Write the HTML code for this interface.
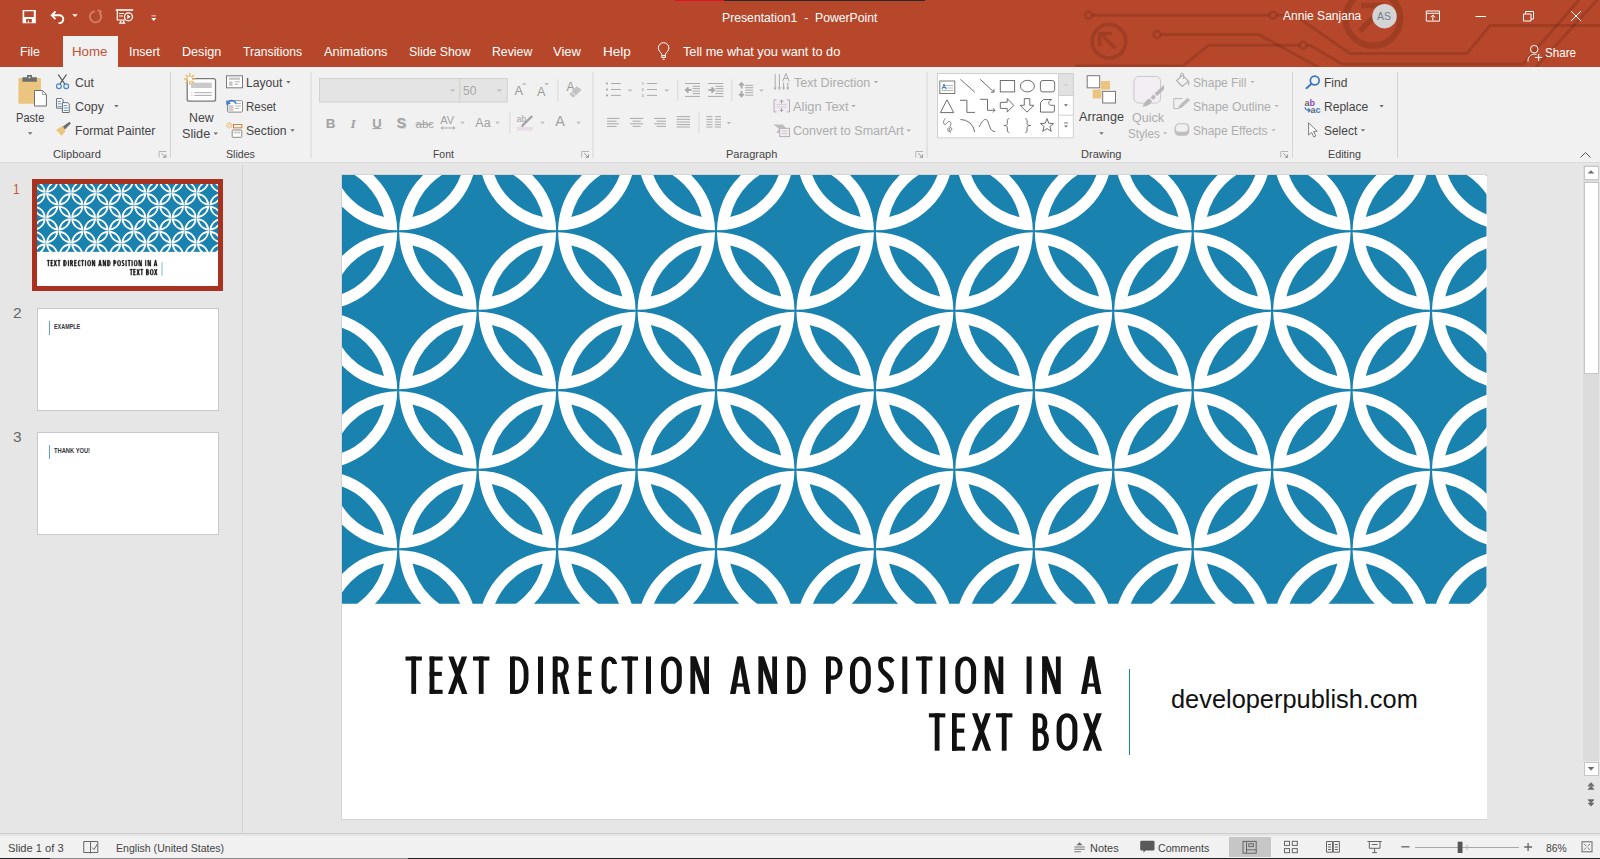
<!DOCTYPE html>
<html><head><meta charset="utf-8"><title>PowerPoint</title>
<style>
*{margin:0;padding:0;box-sizing:border-box}
html,body{width:1600px;height:859px;overflow:hidden}
body{position:relative;font-family:"Liberation Sans",sans-serif;background:#E6E6E6}
.a{position:absolute}
.t{position:absolute;white-space:nowrap;line-height:1;transform-origin:0 50%}
svg{position:absolute;overflow:visible}
.th .ttl g path:not([fill]){stroke:#111;stroke-width:2.2}
.th .ttl > path{stroke-width:7}
</style></head><body>
<!-- title bar + tabs -->
<div class="a" style="left:0;top:0;width:1600px;height:67px;background:#B7472A"></div>
<div class="a" style="left:675px;top:0;width:49px;height:1px;background:#E81123"></div>
<div class="a" style="left:724px;top:0;width:201px;height:1px;background:#2B2B2B"></div>
<div class="a" style="left:63px;top:36px;width:55px;height:31px;background:#F1F1F1"></div>
<svg width="1600" height="67" style="left:0;top:0">
<g fill="none" stroke="#000" stroke-opacity="0.12" stroke-width="3">
<path d="M1092.2 15.2H1269.5M1276.5 15.2H1294.7L1350 53.5H1467L1490 25.5H1600"/>
<circle cx="1088.7" cy="15.2" r="3.5" stroke-width="2.6"/>
<circle cx="1273" cy="15.2" r="3.5" stroke-width="2.6"/>
<circle cx="1109" cy="41.3" r="16.8" stroke-width="3.7"/>
<path d="M1115.5 48.5L1101 34M1099.5 46V33.5H1112" stroke-width="3.6"/>
<path d="M1160.5 34.6H1259L1318 67"/>
<circle cx="1157" cy="34.6" r="3.5" stroke-width="2.6"/>
<path d="M1075 66H1183L1208.5 45.2H1299.5M1306.5 45.2H1310L1342 64H1523L1579 0"/>
<circle cx="1303" cy="45.2" r="3.5" stroke-width="2.6"/>
<path d="M1536 67L1599 -2"/>
<circle cx="1373" cy="18.5" r="27.3" stroke-width="6.5"/>
<path d="M1360 31L1376 15M1361 5.5H1381V26" stroke-width="5.5"/>
</g>
<!-- QAT -->
<g fill="#fff">
<path fill-rule="evenodd" d="M22.6 10H35.8V23.2H22.6ZM24.2 11.3V17H33.8V11.3ZM26.1 19.1V22.4H27.9V20.4H28.9V22.4H31.85V19.1Z"/>
<path d="M72.2 14.3H77.8L75 16.9Z"/>
<path d="M151.4 15.5H156.1V16.3H151.4ZM151.2 17.9H156.3L153.75 20.9Z"/>
</g>
<g fill="none" stroke="#fff">
<path d="M55.5 11.5L51.8 15.3L55.5 19.1M52 15.3H59.3A4 4 0 0 1 63.3 19.3A3.8 3.8 0 0 1 59.5 23.1H58.5" stroke-width="1.9"/>
<path d="M99.5 12.8A5.6 5.6 0 1 1 94.8 11.2M97.5 10.2L100.8 11.4L99.6 14.8" stroke-width="1.9" stroke-opacity="0.3"/>
<path d="M115.8 10H133.2" stroke-width="1.6"/>
<path d="M117.3 10.5V20H125.5M119 13.5H124M119 16H123" stroke-width="1.2"/>
<circle cx="128.5" cy="16.8" r="4" stroke-width="1.3"/>
<path d="M121.3 20.5L119.8 23.2H124.6L123.1 20.5" stroke-width="1.2"/>
</g>
<path d="M127.3 14.6L130.6 16.8L127.3 19Z" fill="#fff"/>
<!-- window controls -->
<g fill="none" stroke="#fff" stroke-width="1">
<path d="M1426.3 11H1439.5V21.1H1426.3ZM1426.3 13.3H1439.5M1432.9 20.5V15.2M1430.6 17.3L1432.9 15L1435.2 17.3" />
<path d="M1475.5 16.5H1486"/>
<path d="M1523.5 14H1531V21H1523.5ZM1525.5 14V11.5H1533.5V19H1531"/>
<path d="M1571 11L1581 21M1581 11L1571 21"/>
<circle cx="1534.2" cy="49.2" r="3.8"/>
<path d="M1528 61.5A6.5 6.5 0 0 1 1536.5 54.5M1538.7 53.8V61M1535.1 57.4H1542.3"/>
<!-- lightbulb -->
<path d="M661.8 54.2C661.2 52.5 658.3 51 658.3 48A5.3 5.3 0 0 1 668.9 48C668.9 51 666 52.5 665.4 54.2V57.5H661.8ZM661.8 55.7H665.4M662.6 59.3H664.6"/>
</g>
<circle cx="1384.5" cy="16.2" r="12.2" fill="#D4D4D4"/>
</svg>
<div class="t" style="left:1377.3px;top:11px;font-size:11px;color:#6F7F8E;transform:scaleX(0.95)">AS</div>

<!-- ribbon -->
<div class="a" style="left:0;top:67px;width:1600px;height:95px;background:#F1F1F1"></div>
<div class="a" style="left:0;top:162px;width:1600px;height:1px;background:#DADADA"></div>
<svg width="1600" height="100" viewBox="0 67 1600 100" style="left:0;top:67px">
<!-- group separators -->
<g fill="#D5D5D5">
<rect x="170" y="72" width="1" height="86"/><rect x="310.5" y="72" width="1" height="86"/>
<rect x="592.5" y="72" width="1" height="86"/><rect x="926.5" y="72" width="1" height="86"/>
<rect x="1292" y="72" width="1" height="86"/><rect x="1397" y="72" width="1" height="86"/>
</g>
<!-- Paste -->
<rect x="18.4" y="78.1" width="22.5" height="25.7" rx="1" fill="#EBC47F"/>
<path d="M22.4 77.3H27V75H32V77.3H36.9V81.8H22.4Z" fill="#6E6E6E"/>
<circle cx="29.5" cy="77.4" r="0.9" fill="#F1F1F1"/>
<path d="M34.5 90.5H42.4L46.4 94.5V106H34.5Z" fill="#fff" stroke="#6E6E6E" stroke-width="1"/>
<path d="M42.4 90.5V94.5H46.4" fill="none" stroke="#8A8A8A" stroke-width="0.8"/>
<path d="M27.9 132.3H32.4L30.15 134.8Z" fill="#6E6E6E"/>
<!-- Cut -->
<path d="M58.2 74.5L64.8 84M66.5 74.5L59.9 84" stroke="#555" stroke-width="1.3" fill="none"/>
<circle cx="58.9" cy="86.3" r="2.4" fill="none" stroke="#4A86C8" stroke-width="1.2"/>
<circle cx="66.2" cy="86.3" r="2.4" fill="none" stroke="#4A86C8" stroke-width="1.2"/>
<!-- Copy -->
<path d="M56.6 98.6H61.8L63.2 100V108.2H56.6Z" fill="#fff" stroke="#6A6A6A" stroke-width="1"/>
<path d="M57.8 101.5H60.8M57.8 103.8H61.5M57.8 106.4H61.5" stroke="#4A86C8" stroke-width="0.9"/>
<path d="M62.4 102.7H67.8L69.2 104.1V112.5H62.4Z" fill="#fff" stroke="#6A6A6A" stroke-width="1"/>
<path d="M63.6 105.5H67M63.6 107.9H68M63.6 110.4H68" stroke="#4A86C8" stroke-width="0.9"/>
<path d="M114.2 105H118.6L116.4 107.5Z" fill="#6E6E6E"/>
<!-- Format painter -->
<path d="M56 129.8L62.5 126L65.5 131L61.7 136Z" fill="#EBC47F"/>
<path d="M62.8 126.5L69.5 121.8L70.8 123.6L65 129.5Z" fill="#6E6E6E"/>

<!-- New slide -->
<rect x="187.2" y="78.6" width="28.3" height="22.6" rx="2" fill="#fff" stroke="#7A7A7A" stroke-width="1.3"/>
<rect x="191" y="82.6" width="20.8" height="5.4" fill="#CACACA"/>
<path d="M194.3 92.7H211.8M194.3 95.4H211.8M191.4 92.7H192.4M191.4 95.4H192.4" stroke="#A0A0A0" stroke-width="0.9"/>
<g stroke="#EBB866" stroke-width="1.5"><path d="M189.8 73.3V84.7M184.1 79H195.5M185.8 75L193.8 83M185.8 83L193.8 75"/></g>
<circle cx="189.8" cy="79" r="2.2" fill="#fff"/>
<path d="M213.5 132.6H218L215.75 135Z" fill="#6E6E6E"/>
<!-- Layout -->
<rect x="226.5" y="75.8" width="16" height="12" fill="#fff" stroke="#7A7A7A" stroke-width="1"/>
<rect x="228.9" y="77.5" width="11" height="2.4" fill="#C8C8C8"/>
<rect x="228.9" y="81.4" width="3.7" height="4.5" fill="#C8C8C8"/>
<path d="M234.5 81.8H239.9M234.5 84.2H238.5" stroke="#A8A8A8" stroke-width="0.9"/>
<path d="M286.2 81H290.6L288.4 83.4Z" fill="#6E6E6E"/>
<!-- Reset -->
<rect x="227.5" y="100.7" width="15" height="11.4" rx="1" fill="#fff" stroke="#8A8A8A" stroke-width="1"/>
<rect x="228.5" y="105" width="5" height="6.5" fill="#D0D0D0"/>
<path d="M235 103.5H241M235 106H241M235 108.5H239" stroke="#B0B0B0" stroke-width="0.9"/>
<path d="M236 103.5A4.5 4.5 0 0 0 228.3 102.3" fill="none" stroke="#3E7CC4" stroke-width="1.6"/>
<path d="M226 100.3L226.6 105.2L231 103.5Z" fill="#3E7CC4"/>
<!-- Section -->
<g stroke="#EBB866" stroke-width="1"><path d="M229.3 122V128.8M225.9 125.4H232.7M226.9 123L231.7 127.8M226.9 127.8L231.7 123"/></g>
<circle cx="229.3" cy="125.4" r="1.2" fill="#F1F1F1"/>
<rect x="233.5" y="124.5" width="8.3" height="3.3" fill="#fff" stroke="#E07A3C" stroke-width="1"/>
<rect x="232.2" y="130" width="9.6" height="7.3" rx="0.8" fill="#fff" stroke="#8A8A8A" stroke-width="1"/>
<rect x="233.7" y="131.6" width="6.6" height="1.8" fill="#C8C8C8"/>
<path d="M290.3 129.3H294.7L292.5 131.7Z" fill="#6E6E6E"/>
<!-- FONT group -->
<rect x="319.5" y="78.5" width="140.5" height="23.6" fill="#E4E4E4" stroke="#D2D2D2" stroke-width="1"/>
<rect x="460" y="78.5" width="47.3" height="23.6" fill="#E4E4E4" stroke="#D2D2D2" stroke-width="1"/>
<g fill="#B8B8B8">
<path d="M450.2 89.5H455L452.6 91.8Z"/><path d="M497 89.5H501.8L499.4 91.8Z"/>
<path d="M521.9 84.8H526.3L524.1 82.5Z"/><path d="M544.4 83H548.8L546.6 85.5Z"/>
<path d="M460.3 121.8H464.7L462.5 124Z"/><path d="M495.3 121.8H499.7L497.5 124Z"/>
<path d="M540.3 121.8H544.7L542.5 124Z"/><path d="M576.3 121.8H580.7L578.5 124Z"/>
<path d="M627.7 89.5H632.5L630.1 91.8Z"/><path d="M664.3 89.5H669.1L666.7 91.8Z"/>
<path d="M759 89.5H763.8L761.4 91.8Z"/><path d="M726.6 122H731.4L729 124.3Z"/>
</g>
<g font-family="Liberation Sans" fill="#A2A2A2">
<text x="514.6" y="94.8" font-size="12.8" fill="#9A9A9A">A</text>
<text x="537.1" y="95.8" font-size="12.6" fill="#9A9A9A">A</text>
<text x="566.6" y="91" font-size="12" fill="#9A9A9A">A</text>
<text x="325.8" y="127.7" font-size="13.5" font-weight="700">B</text>
<text x="350.5" y="127.7" font-size="13.5" font-weight="700" font-family="Liberation Serif" font-style="italic">I</text>
<text x="372.3" y="127.5" font-size="13" font-weight="700">U</text>
<text x="397.5" y="128.6" font-size="14.5" font-weight="700" fill="#D8D8D8">S</text>
<text x="396.5" y="127.7" font-size="14.5" font-weight="700">S</text>
<text x="415.5" y="127.6" font-size="11.5">abc</text>
<text x="440.3" y="124" font-size="11">AV</text>
<text x="475.3" y="126.5" font-size="12.5">Aa</text>
<text x="516.8" y="121.5" font-size="8.5">ab</text>
<text x="555.3" y="125.6" font-size="14.5">A</text>
</g>
<path d="M372.5 128.6H381.5M415.5 124.3H432.2" stroke="#A2A2A2" stroke-width="1"/>
<path d="M441 128H455M443 126.3L441 128L443 129.7M453 126.3L455 128L453 129.7" fill="none" stroke="#A2A2A2" stroke-width="0.9"/>
<path d="M569.3 94.3L576.5 86.3L581.8 89.8L573.5 97.8Z" fill="#C4C2C6"/>
<path d="M571.4 92L575.6 95.6" stroke="#F1F1F1" stroke-width="0.9"/>
<path d="M522 126L532.2 116" stroke="#A2A2A2" stroke-width="2.4"/>
<path d="M522.5 125.7L520.5 127H523.5Z" fill="#A2A2A2"/>
<rect x="517" y="127" width="16" height="3.5" fill="#E8DCE8"/>
<rect x="557.3" y="79.5" width="1" height="22" fill="#D8D8D8"/>
<rect x="509.3" y="112" width="1" height="21.5" fill="#D8D8D8"/>

<!-- PARAGRAPH group -->
<g fill="#A8A8A8">
<circle cx="607" cy="83.5" r="1.1"/><circle cx="607" cy="89.5" r="1.1"/><circle cx="607" cy="95.4" r="1.1"/>
</g>
<g stroke="#ABABAB" stroke-width="1" fill="none">
<path d="M611 83.5H620.8M611 89.5H620.8M611 95.4H620.8"/>
<path d="M646.9 83.5H657M646.9 89.5H657M646.9 95.4H657"/>
<path d="M685 83.5H700M685 96.4H700M692.6 86.3H700M692.6 88.6H700M692.6 91.1H700M692.6 93.6H700"/>
<path d="M708 83.5H723.4M708 96.4H723.4M715.5 86.3H723.4M715.5 88.6H723.4M715.5 91.1H723.4M715.5 93.6H723.4"/>
<path d="M745.2 85.3H753.2M745.2 87.7H753.2M745.2 90.2H753.2M745.2 92.7H753.2M745.2 95.2H753.2"/>
<path d="M607 118.4H619.3M607 121.2H616.6M607 123.8H619.3M607 126.4H616.6"/>
<path d="M629.9 118.4H643.2M632.5 121.2H640.7M629.9 123.8H643.2M632.5 126.4H640.7"/>
<path d="M654 118.4H666M656.5 121.2H666M654 123.8H666M656.5 126.4H666"/>
<path d="M676.6 116.6H690M676.6 119.3H690M676.6 122H690M676.6 124.6H690M676.6 127H690"/>
<path d="M706.4 116.6H712.5M714.9 116.6H721M706.4 119.3H712.5M714.9 119.3H721M706.4 122H712.5M714.9 122H721M706.4 124.6H712.5M714.9 124.6H721M706.4 127H712.5M714.9 127H721"/>
</g>
<g stroke="#A8A8A8" stroke-width="1.8" fill="none">
<path d="M691.5 90H686M688.5 87.3L685.8 90L688.5 92.7"/>
<path d="M708.5 90H714M711.5 87.3L714.2 90L711.5 92.7"/>
<path d="M741.5 83.5V88.5M739.2 85.5L741.5 83L743.8 85.5M741.5 91V96.3M739.2 94L741.5 96.5L743.8 94"/>
</g>
<g font-family="Liberation Sans" fill="#A8A8A8" font-size="4.2" font-weight="700">
<text x="641.5" y="85.2">1</text><text x="641.5" y="91.2">2</text><text x="641.5" y="97.1">3</text>
</g>
<rect x="677.2" y="79.4" width="1" height="21.8" fill="#D8D8D8"/>
<rect x="731.4" y="79.4" width="1" height="21.8" fill="#D8D8D8"/>
<rect x="698.4" y="112" width="1" height="21.6" fill="#D8D8D8"/>
<!-- Text direction -->
<g stroke="#ABABAB" stroke-width="1" fill="none">
<path d="M775.2 74.2V89.2M779.4 74.2V89.2M783.6 82.6V89.2M787.8 82.6V89.2"/>
<path d="M782.7 81.3L785.95 73.4L789.2 81.3M784 78.4H788"/>
</g>
<g fill="#ABABAB"><path d="M773.7 87.5H776.7L775.2 90Z"/><path d="M777.9 87.5H780.9L779.4 90Z"/><path d="M782.1 87.5H785.1L783.6 90Z"/><path d="M786.3 87.5H789.3L787.8 90Z"/>
<path d="M873.8 81H878.2L876 83.3Z"/><path d="M851.3 105H855.7L853.5 107.3Z"/><path d="M906.5 129.4H910.9L908.7 131.7Z"/></g>
<!-- Align text -->
<rect x="774" y="99.5" width="15.5" height="12.5" fill="#F2EAF2"/>
<path d="M776.5 99.8H774V111.9H776.5M787 99.8H789.5V111.9H787" fill="none" stroke="#B0B0B0" stroke-width="1"/>
<path d="M776.5 104.4H786.5M776.5 106.9H786.5" stroke="#C8C8C8" stroke-width="0.8"/>
<path d="M781.5 100V103.5M779.8 101.7L781.5 100L783.2 101.7M781.5 108V111.5M779.8 109.8L781.5 111.5L783.2 109.8" fill="none" stroke="#A0A0A0" stroke-width="1"/>
<!-- Convert to smartart -->
<path d="M773.4 124.5H783L786.4 129H779.5V132.9H776.4L779 128.8Z" fill="#BDBDBD"/>
<rect x="779.7" y="128.3" width="9.8" height="8.3" fill="#F2EAF2" stroke="#B0B0B0" stroke-width="1"/>
<path d="M782 131H787.5M782 133.5H787.5" stroke="#C0C0C0" stroke-width="0.8"/>

<!-- DRAWING gallery -->
<rect x="937.5" y="73.5" width="135.8" height="64.3" fill="#fff" stroke="#D0D0D0" stroke-width="1"/>
<rect x="1058.5" y="73.5" width="14.8" height="22" fill="#E1E1E1" stroke="#D0D0D0" stroke-width="1"/>
<path d="M1058.5 95.5H1073.3M1058.5 115.2H1073.3M1058.5 73.5V137.8" stroke="#D0D0D0" stroke-width="1"/>
<path d="M1063.9 85.5H1068L1065.95 83.5Z" fill="#C8C8C8"/>
<path d="M1063.9 104.3H1068L1065.95 106.4Z" fill="#6E6E6E"/>
<path d="M1063.9 125.5H1068L1065.95 127.6Z" fill="#6E6E6E"/><rect x="1063.9" y="122.5" width="4.1" height="0.9" fill="#6E6E6E"/>
<g fill="none" stroke="#6E6E6E" stroke-width="1">
<rect x="939.8" y="81" width="15" height="12.5" stroke="#7A7A7A"/>
<path d="M945.5 85.5H953M945.5 88H953M941.5 90.5H953" stroke="#A8A8A8" stroke-width="0.8"/>
<path d="M960.4 79.3L974.8 92.2"/>
<path d="M980.2 79.3L994 92.2M994 89L994 92.2L991 92.2"/>
<rect x="1000.3" y="80.5" width="14.3" height="11.4"/>
<ellipse cx="1027.4" cy="86.1" rx="7" ry="5.8"/>
<rect x="1040.4" y="80.5" width="14.3" height="11.4" rx="2.5"/>
<path d="M940.4 112.6L947 99.8L953.7 112.6Z"/>
<path d="M960 100.3H966.9V112.4H974.9"/>
<path d="M980.2 99.3H987.5V110.3H995M992.8 108.1L995 110.3L992.8 112.5"/>
<path d="M1000.3 102.3H1007.2V98.6L1013.8 105.4L1007.2 112.1V108.4H1000.3Z"/>
<path d="M1024.3 98.6H1029.8V105.3H1034L1027 112.1L1020.1 105.3H1024.3Z"/>
<path d="M1040.5 112.1V102.5L1043.5 99.5H1051.6C1049.6 100.5 1048.5 102 1048.8 103.5C1049 104.6 1049.8 105.3 1051 105.3H1054.4V110.8A1.3 1.3 0 0 1 1053.1 112.1Z"/>
<path d="M945.5 118.3C944 120 942.5 122.5 944.3 124.3C946 125.5 947.5 121 949.5 121.5C952 122.3 950.5 126 949.2 127.3C947.5 128.8 946.8 130.3 948.8 131C951 131.5 952.6 129.6 951.3 127.8C950 126.8 948.8 129.5 949.4 131.5L950.8 132.8" stroke-width="0.9"/>
<path d="M960.4 119.5A14 14 0 0 1 974.7 132"/>
<path d="M979.1 127C981 123.5 983 119.4 985.6 119.4C988 119.4 988.5 124 989.8 127C991 130 992.5 131.6 995.1 131.6"/>
<path d="M1009.2 118.6C1007.6 118.8 1007.3 119.8 1007.3 121.2V123.5C1007.3 124.8 1006.5 125.5 1003.8 125.5C1006.5 125.5 1007.3 126.3 1007.3 127.6V130C1007.3 131.4 1007.6 132.3 1009.2 132.5"/>
<path d="M1025.2 118.6C1026.8 118.8 1027.1 119.8 1027.1 121.2V123.5C1027.1 124.8 1027.9 125.5 1030.6 125.5C1027.9 125.5 1027.1 126.3 1027.1 127.6V130C1027.1 131.4 1026.8 132.3 1025.2 132.5"/>
<path d="M1047 118.6L1048.8 123.3L1053.6 123.5L1049.9 126.6L1051.3 131.4L1047 128.6L1042.7 131.4L1044.1 126.6L1040.4 123.5L1045.2 123.3Z"/>
</g>
<path d="M942 89.3L944 84L946 89.3M942.8 87.5H945.2" fill="none" stroke="#3E7CC4" stroke-width="1"/>
<!-- Arrange -->
<rect x="1100.9" y="81" width="9.1" height="8.6" fill="#EBC47F"/>
<rect x="1092.7" y="89.6" width="8.8" height="8.8" fill="#EBC47F"/>
<rect x="1087.2" y="75.7" width="12.5" height="12.1" fill="#fff" stroke="#777" stroke-width="1"/>
<rect x="1102.7" y="91.4" width="12.8" height="11.6" fill="#fff" stroke="#777" stroke-width="1"/>
<path d="M1099.3 132.3H1103.7L1101.5 134.7Z" fill="#6E6E6E"/>
<!-- Quick styles -->
<rect x="1133.9" y="76.4" width="26.7" height="26.7" rx="5" fill="#F3EEF3" stroke="#C8C8C8" stroke-width="1"/>
<path d="M1142.2 106.5C1145 103 1146 99.5 1149.5 98.5L1152 101C1151 104.5 1147 106.5 1142.2 106.5Z" fill="#B8B8B8"/>
<path d="M1150.5 97.5L1153.5 94.5L1156 97L1153 100Z" fill="#B8B8B8"/>
<path d="M1154.5 93.5L1164 84.7V89.5L1157 96Z" fill="#B8B8B8"/>
<path d="M1163 102.5L1164.5 101.2L1164.5 107L1162.5 110.8L1160.6 110.8Z" fill="none"/>
<!-- Shape fill / outline / effects -->
<path d="M1176.6 80.5L1182.6 75.2L1188.3 81.2L1182.2 86.5Z" fill="#F3EEF3" stroke="#B0B0B0" stroke-width="1.1" stroke-linejoin="round"/>
<path d="M1180.4 77.5V74.8A1.6 1.6 0 0 1 1183.6 74.8V79" fill="none" stroke="#B0B0B0" stroke-width="1"/>
<path d="M1187.5 80.2C1189 80.5 1189.6 82 1189.4 83.5L1189 86L1187.8 84.5Z" fill="#B8B8B8"/>
<path d="M1182.5 98.6H1173.8V108.5H1179" fill="none" stroke="#B8B8B8" stroke-width="1"/>
<path d="M1178.2 108.6L1179 105.8L1187.6 97.8L1190 100.2L1181.3 108.1Z" fill="#BDBDBD"/>
<path d="M1174.5 129.2C1174.5 125.5 1176.5 123.2 1180 123.2H1184.5C1188 123.2 1189.3 125 1189.3 128.5V131C1189.3 134 1187.5 135.7 1184.5 135.7H1178.5C1176 135.7 1174.5 133.5 1174.5 129.2Z" fill="#BEBEBE"/>
<path d="M1175.8 128.3C1175.8 125.5 1177.3 124.3 1180 124.3H1184C1186.6 124.3 1187.8 125.3 1187.8 127.3V128.8C1187.8 130.7 1186.8 131.8 1184.3 131.8H1178.5C1176.6 131.8 1175.8 130.5 1175.8 128.3Z" fill="#F3EEF3"/>
<g fill="#B8B8B8">
<path d="M1250.4 81H1254.6L1252.5 83.2Z"/><path d="M1274.5 105H1278.7L1276.6 107.2Z"/><path d="M1271.4 129.2H1275.6L1273.5 131.4Z"/>
<path d="M1163 132.3H1167.2L1165.1 134.6Z"/>
</g>
<!-- Editing -->
<circle cx="1314.75" cy="80.5" r="4.4" fill="none" stroke="#3B78C0" stroke-width="1.7"/>
<path d="M1311.5 83.8L1306.5 88.2" stroke="#3B78C0" stroke-width="2" stroke-linecap="round"/>
<g font-family="Liberation Sans" font-size="9" font-weight="700">
<text x="1304.6" y="105.6" fill="#666">a</text><text x="1309.6" y="105.6" fill="#8A4FB8">b</text>
<text x="1310.6" y="113.3" fill="#666">a</text><text x="1315.6" y="113.3" fill="#3B78C0">c</text>
</g>
<path d="M1305 107.2C1305 109.5 1306.5 110.3 1310 110.3M1308.1 108.4L1310.2 110.3L1308.1 112.2" fill="none" stroke="#3B78C0" stroke-width="1.2"/>
<path d="M1379.4 105H1383.8L1381.6 107.4Z M1360.8 129.2H1365.2L1363 131.6Z" fill="#6E6E6E"/>
<path d="M1308.6 122.8V135L1311.6 132.3L1313.8 137L1315.8 136L1313.6 131.5L1317.2 131.2Z" fill="#fff" stroke="#6E6E6E" stroke-width="0.9" stroke-linejoin="round"/>
<path d="M159.1 157.6V151.5H166.4" fill="none" stroke="#B4B4B4" stroke-width="1"/><path d="M161.6 153.3L165.5 157.1M165.9 154.3V157.3H162.9" fill="none" stroke="#8C8C8C" stroke-width="0.9"/><path d="M581.7 157.6V151.5H589.0" fill="none" stroke="#B4B4B4" stroke-width="1"/><path d="M584.2 153.3L588.1 157.1M588.5 154.3V157.3H585.5" fill="none" stroke="#8C8C8C" stroke-width="0.9"/><path d="M915.8 157.6V151.5H923.1" fill="none" stroke="#B4B4B4" stroke-width="1"/><path d="M918.3 153.3L922.2 157.1M922.6 154.3V157.3H919.6" fill="none" stroke="#8C8C8C" stroke-width="0.9"/><path d="M1280.8 157.6V151.5H1288.1" fill="none" stroke="#B4B4B4" stroke-width="1"/><path d="M1283.3 153.3L1287.2 157.1M1287.6 154.3V157.3H1284.6" fill="none" stroke="#8C8C8C" stroke-width="0.9"/>
<!-- collapse ribbon -->
<path d="M1580.5 157.5L1585.5 152.5L1590.5 157.5" fill="none" stroke="#555" stroke-width="1"/>
</svg>
<!-- left pane splitter -->
<div class="a" style="left:242px;top:165px;width:1px;height:668px;background:#D2D2D2"></div>
<!-- slide -->
<div class="a" style="left:341px;top:174px;width:1146px;height:646px;background:#D4D4D4"></div>
<div class="a" style="left:342px;top:175px;width:1144.5px;height:644px;background:#FFFFFF;overflow:hidden">
  <svg width="1144.5" height="428.75" style="left:0;top:0;overflow:hidden">
    <rect width="1144.5" height="428.75" fill="#1A82AE"/>
    <g fill="#FFFFFF"><path fill-rule="evenodd" d="M-22.24 -22.09A78.45 78.45 0 0 0 55.19 55.34A78.45 78.45 0 0 0 -22.24 -22.09ZM-9.01 -8.86A66.75 66.75 0 0 0 41.96 42.11A66.75 66.75 0 0 0 -9.01 -8.86ZM-22.24 136.81A78.45 78.45 0 0 0 55.19 214.24A78.45 78.45 0 0 0 -22.24 136.81ZM-9.01 150.04A66.75 66.75 0 0 0 41.96 201.01A66.75 66.75 0 0 0 -9.01 150.04ZM-22.24 295.71A78.45 78.45 0 0 0 55.19 373.14A78.45 78.45 0 0 0 -22.24 295.71ZM-9.01 308.94A66.75 66.75 0 0 0 41.96 359.91A66.75 66.75 0 0 0 -9.01 308.94ZM57.21 57.36A78.45 78.45 0 0 0 134.64 134.79A78.45 78.45 0 0 0 57.21 57.36ZM70.44 70.59A66.75 66.75 0 0 0 121.41 121.56A66.75 66.75 0 0 0 70.44 70.59ZM55.19 57.36A78.45 78.45 0 0 1 -22.24 134.79A78.45 78.45 0 0 1 55.19 57.36ZM41.96 70.59A66.75 66.75 0 0 1 -9.01 121.56A66.75 66.75 0 0 1 41.96 70.59ZM57.21 216.26A78.45 78.45 0 0 0 134.64 293.69A78.45 78.45 0 0 0 57.21 216.26ZM70.44 229.49A66.75 66.75 0 0 0 121.41 280.46A66.75 66.75 0 0 0 70.44 229.49ZM55.19 216.26A78.45 78.45 0 0 1 -22.24 293.69A78.45 78.45 0 0 1 55.19 216.26ZM41.96 229.49A66.75 66.75 0 0 1 -9.01 280.46A66.75 66.75 0 0 1 41.96 229.49ZM57.21 375.16A78.45 78.45 0 0 0 134.64 452.59A78.45 78.45 0 0 0 57.21 375.16ZM70.44 388.39A66.75 66.75 0 0 0 121.41 439.36A66.75 66.75 0 0 0 70.44 388.39ZM55.19 375.16A78.45 78.45 0 0 1 -22.24 452.59A78.45 78.45 0 0 1 55.19 375.16ZM41.96 388.39A66.75 66.75 0 0 1 -9.01 439.36A66.75 66.75 0 0 1 41.96 388.39ZM136.66 -22.09A78.45 78.45 0 0 0 214.09 55.34A78.45 78.45 0 0 0 136.66 -22.09ZM149.89 -8.86A66.75 66.75 0 0 0 200.86 42.11A66.75 66.75 0 0 0 149.89 -8.86ZM134.64 -22.09A78.45 78.45 0 0 1 57.21 55.34A78.45 78.45 0 0 1 134.64 -22.09ZM121.41 -8.86A66.75 66.75 0 0 1 70.44 42.11A66.75 66.75 0 0 1 121.41 -8.86ZM136.66 136.81A78.45 78.45 0 0 0 214.09 214.24A78.45 78.45 0 0 0 136.66 136.81ZM149.89 150.04A66.75 66.75 0 0 0 200.86 201.01A66.75 66.75 0 0 0 149.89 150.04ZM134.64 136.81A78.45 78.45 0 0 1 57.21 214.24A78.45 78.45 0 0 1 134.64 136.81ZM121.41 150.04A66.75 66.75 0 0 1 70.44 201.01A66.75 66.75 0 0 1 121.41 150.04ZM136.66 295.71A78.45 78.45 0 0 0 214.09 373.14A78.45 78.45 0 0 0 136.66 295.71ZM149.89 308.94A66.75 66.75 0 0 0 200.86 359.91A66.75 66.75 0 0 0 149.89 308.94ZM134.64 295.71A78.45 78.45 0 0 1 57.21 373.14A78.45 78.45 0 0 1 134.64 295.71ZM121.41 308.94A66.75 66.75 0 0 1 70.44 359.91A66.75 66.75 0 0 1 121.41 308.94ZM216.11 57.36A78.45 78.45 0 0 0 293.54 134.79A78.45 78.45 0 0 0 216.11 57.36ZM229.34 70.59A66.75 66.75 0 0 0 280.31 121.56A66.75 66.75 0 0 0 229.34 70.59ZM214.09 57.36A78.45 78.45 0 0 1 136.66 134.79A78.45 78.45 0 0 1 214.09 57.36ZM200.86 70.59A66.75 66.75 0 0 1 149.89 121.56A66.75 66.75 0 0 1 200.86 70.59ZM216.11 216.26A78.45 78.45 0 0 0 293.54 293.69A78.45 78.45 0 0 0 216.11 216.26ZM229.34 229.49A66.75 66.75 0 0 0 280.31 280.46A66.75 66.75 0 0 0 229.34 229.49ZM214.09 216.26A78.45 78.45 0 0 1 136.66 293.69A78.45 78.45 0 0 1 214.09 216.26ZM200.86 229.49A66.75 66.75 0 0 1 149.89 280.46A66.75 66.75 0 0 1 200.86 229.49ZM216.11 375.16A78.45 78.45 0 0 0 293.54 452.59A78.45 78.45 0 0 0 216.11 375.16ZM229.34 388.39A66.75 66.75 0 0 0 280.31 439.36A66.75 66.75 0 0 0 229.34 388.39ZM214.09 375.16A78.45 78.45 0 0 1 136.66 452.59A78.45 78.45 0 0 1 214.09 375.16ZM200.86 388.39A66.75 66.75 0 0 1 149.89 439.36A66.75 66.75 0 0 1 200.86 388.39ZM295.56 -22.09A78.45 78.45 0 0 0 372.99 55.34A78.45 78.45 0 0 0 295.56 -22.09ZM308.79 -8.86A66.75 66.75 0 0 0 359.76 42.11A66.75 66.75 0 0 0 308.79 -8.86ZM293.54 -22.09A78.45 78.45 0 0 1 216.11 55.34A78.45 78.45 0 0 1 293.54 -22.09ZM280.31 -8.86A66.75 66.75 0 0 1 229.34 42.11A66.75 66.75 0 0 1 280.31 -8.86ZM295.56 136.81A78.45 78.45 0 0 0 372.99 214.24A78.45 78.45 0 0 0 295.56 136.81ZM308.79 150.04A66.75 66.75 0 0 0 359.76 201.01A66.75 66.75 0 0 0 308.79 150.04ZM293.54 136.81A78.45 78.45 0 0 1 216.11 214.24A78.45 78.45 0 0 1 293.54 136.81ZM280.31 150.04A66.75 66.75 0 0 1 229.34 201.01A66.75 66.75 0 0 1 280.31 150.04ZM295.56 295.71A78.45 78.45 0 0 0 372.99 373.14A78.45 78.45 0 0 0 295.56 295.71ZM308.79 308.94A66.75 66.75 0 0 0 359.76 359.91A66.75 66.75 0 0 0 308.79 308.94ZM293.54 295.71A78.45 78.45 0 0 1 216.11 373.14A78.45 78.45 0 0 1 293.54 295.71ZM280.31 308.94A66.75 66.75 0 0 1 229.34 359.91A66.75 66.75 0 0 1 280.31 308.94ZM375.01 57.36A78.45 78.45 0 0 0 452.44 134.79A78.45 78.45 0 0 0 375.01 57.36ZM388.24 70.59A66.75 66.75 0 0 0 439.21 121.56A66.75 66.75 0 0 0 388.24 70.59ZM372.99 57.36A78.45 78.45 0 0 1 295.56 134.79A78.45 78.45 0 0 1 372.99 57.36ZM359.76 70.59A66.75 66.75 0 0 1 308.79 121.56A66.75 66.75 0 0 1 359.76 70.59ZM375.01 216.26A78.45 78.45 0 0 0 452.44 293.69A78.45 78.45 0 0 0 375.01 216.26ZM388.24 229.49A66.75 66.75 0 0 0 439.21 280.46A66.75 66.75 0 0 0 388.24 229.49ZM372.99 216.26A78.45 78.45 0 0 1 295.56 293.69A78.45 78.45 0 0 1 372.99 216.26ZM359.76 229.49A66.75 66.75 0 0 1 308.79 280.46A66.75 66.75 0 0 1 359.76 229.49ZM375.01 375.16A78.45 78.45 0 0 0 452.44 452.59A78.45 78.45 0 0 0 375.01 375.16ZM388.24 388.39A66.75 66.75 0 0 0 439.21 439.36A66.75 66.75 0 0 0 388.24 388.39ZM372.99 375.16A78.45 78.45 0 0 1 295.56 452.59A78.45 78.45 0 0 1 372.99 375.16ZM359.76 388.39A66.75 66.75 0 0 1 308.79 439.36A66.75 66.75 0 0 1 359.76 388.39ZM454.46 -22.09A78.45 78.45 0 0 0 531.89 55.34A78.45 78.45 0 0 0 454.46 -22.09ZM467.69 -8.86A66.75 66.75 0 0 0 518.66 42.11A66.75 66.75 0 0 0 467.69 -8.86ZM452.44 -22.09A78.45 78.45 0 0 1 375.01 55.34A78.45 78.45 0 0 1 452.44 -22.09ZM439.21 -8.86A66.75 66.75 0 0 1 388.24 42.11A66.75 66.75 0 0 1 439.21 -8.86ZM454.46 136.81A78.45 78.45 0 0 0 531.89 214.24A78.45 78.45 0 0 0 454.46 136.81ZM467.69 150.04A66.75 66.75 0 0 0 518.66 201.01A66.75 66.75 0 0 0 467.69 150.04ZM452.44 136.81A78.45 78.45 0 0 1 375.01 214.24A78.45 78.45 0 0 1 452.44 136.81ZM439.21 150.04A66.75 66.75 0 0 1 388.24 201.01A66.75 66.75 0 0 1 439.21 150.04ZM454.46 295.71A78.45 78.45 0 0 0 531.89 373.14A78.45 78.45 0 0 0 454.46 295.71ZM467.69 308.94A66.75 66.75 0 0 0 518.66 359.91A66.75 66.75 0 0 0 467.69 308.94ZM452.44 295.71A78.45 78.45 0 0 1 375.01 373.14A78.45 78.45 0 0 1 452.44 295.71ZM439.21 308.94A66.75 66.75 0 0 1 388.24 359.91A66.75 66.75 0 0 1 439.21 308.94ZM533.91 57.36A78.45 78.45 0 0 0 611.34 134.79A78.45 78.45 0 0 0 533.91 57.36ZM547.14 70.59A66.75 66.75 0 0 0 598.11 121.56A66.75 66.75 0 0 0 547.14 70.59ZM531.89 57.36A78.45 78.45 0 0 1 454.46 134.79A78.45 78.45 0 0 1 531.89 57.36ZM518.66 70.59A66.75 66.75 0 0 1 467.69 121.56A66.75 66.75 0 0 1 518.66 70.59ZM533.91 216.26A78.45 78.45 0 0 0 611.34 293.69A78.45 78.45 0 0 0 533.91 216.26ZM547.14 229.49A66.75 66.75 0 0 0 598.11 280.46A66.75 66.75 0 0 0 547.14 229.49ZM531.89 216.26A78.45 78.45 0 0 1 454.46 293.69A78.45 78.45 0 0 1 531.89 216.26ZM518.66 229.49A66.75 66.75 0 0 1 467.69 280.46A66.75 66.75 0 0 1 518.66 229.49ZM533.91 375.16A78.45 78.45 0 0 0 611.34 452.59A78.45 78.45 0 0 0 533.91 375.16ZM547.14 388.39A66.75 66.75 0 0 0 598.11 439.36A66.75 66.75 0 0 0 547.14 388.39ZM531.89 375.16A78.45 78.45 0 0 1 454.46 452.59A78.45 78.45 0 0 1 531.89 375.16ZM518.66 388.39A66.75 66.75 0 0 1 467.69 439.36A66.75 66.75 0 0 1 518.66 388.39ZM613.36 -22.09A78.45 78.45 0 0 0 690.79 55.34A78.45 78.45 0 0 0 613.36 -22.09ZM626.59 -8.86A66.75 66.75 0 0 0 677.56 42.11A66.75 66.75 0 0 0 626.59 -8.86ZM611.34 -22.09A78.45 78.45 0 0 1 533.91 55.34A78.45 78.45 0 0 1 611.34 -22.09ZM598.11 -8.86A66.75 66.75 0 0 1 547.14 42.11A66.75 66.75 0 0 1 598.11 -8.86ZM613.36 136.81A78.45 78.45 0 0 0 690.79 214.24A78.45 78.45 0 0 0 613.36 136.81ZM626.59 150.04A66.75 66.75 0 0 0 677.56 201.01A66.75 66.75 0 0 0 626.59 150.04ZM611.34 136.81A78.45 78.45 0 0 1 533.91 214.24A78.45 78.45 0 0 1 611.34 136.81ZM598.11 150.04A66.75 66.75 0 0 1 547.14 201.01A66.75 66.75 0 0 1 598.11 150.04ZM613.36 295.71A78.45 78.45 0 0 0 690.79 373.14A78.45 78.45 0 0 0 613.36 295.71ZM626.59 308.94A66.75 66.75 0 0 0 677.56 359.91A66.75 66.75 0 0 0 626.59 308.94ZM611.34 295.71A78.45 78.45 0 0 1 533.91 373.14A78.45 78.45 0 0 1 611.34 295.71ZM598.11 308.94A66.75 66.75 0 0 1 547.14 359.91A66.75 66.75 0 0 1 598.11 308.94ZM692.81 57.36A78.45 78.45 0 0 0 770.24 134.79A78.45 78.45 0 0 0 692.81 57.36ZM706.04 70.59A66.75 66.75 0 0 0 757.01 121.56A66.75 66.75 0 0 0 706.04 70.59ZM690.79 57.36A78.45 78.45 0 0 1 613.36 134.79A78.45 78.45 0 0 1 690.79 57.36ZM677.56 70.59A66.75 66.75 0 0 1 626.59 121.56A66.75 66.75 0 0 1 677.56 70.59ZM692.81 216.26A78.45 78.45 0 0 0 770.24 293.69A78.45 78.45 0 0 0 692.81 216.26ZM706.04 229.49A66.75 66.75 0 0 0 757.01 280.46A66.75 66.75 0 0 0 706.04 229.49ZM690.79 216.26A78.45 78.45 0 0 1 613.36 293.69A78.45 78.45 0 0 1 690.79 216.26ZM677.56 229.49A66.75 66.75 0 0 1 626.59 280.46A66.75 66.75 0 0 1 677.56 229.49ZM692.81 375.16A78.45 78.45 0 0 0 770.24 452.59A78.45 78.45 0 0 0 692.81 375.16ZM706.04 388.39A66.75 66.75 0 0 0 757.01 439.36A66.75 66.75 0 0 0 706.04 388.39ZM690.79 375.16A78.45 78.45 0 0 1 613.36 452.59A78.45 78.45 0 0 1 690.79 375.16ZM677.56 388.39A66.75 66.75 0 0 1 626.59 439.36A66.75 66.75 0 0 1 677.56 388.39ZM772.26 -22.09A78.45 78.45 0 0 0 849.69 55.34A78.45 78.45 0 0 0 772.26 -22.09ZM785.49 -8.86A66.75 66.75 0 0 0 836.46 42.11A66.75 66.75 0 0 0 785.49 -8.86ZM770.24 -22.09A78.45 78.45 0 0 1 692.81 55.34A78.45 78.45 0 0 1 770.24 -22.09ZM757.01 -8.86A66.75 66.75 0 0 1 706.04 42.11A66.75 66.75 0 0 1 757.01 -8.86ZM772.26 136.81A78.45 78.45 0 0 0 849.69 214.24A78.45 78.45 0 0 0 772.26 136.81ZM785.49 150.04A66.75 66.75 0 0 0 836.46 201.01A66.75 66.75 0 0 0 785.49 150.04ZM770.24 136.81A78.45 78.45 0 0 1 692.81 214.24A78.45 78.45 0 0 1 770.24 136.81ZM757.01 150.04A66.75 66.75 0 0 1 706.04 201.01A66.75 66.75 0 0 1 757.01 150.04ZM772.26 295.71A78.45 78.45 0 0 0 849.69 373.14A78.45 78.45 0 0 0 772.26 295.71ZM785.49 308.94A66.75 66.75 0 0 0 836.46 359.91A66.75 66.75 0 0 0 785.49 308.94ZM770.24 295.71A78.45 78.45 0 0 1 692.81 373.14A78.45 78.45 0 0 1 770.24 295.71ZM757.01 308.94A66.75 66.75 0 0 1 706.04 359.91A66.75 66.75 0 0 1 757.01 308.94ZM851.71 57.36A78.45 78.45 0 0 0 929.14 134.79A78.45 78.45 0 0 0 851.71 57.36ZM864.94 70.59A66.75 66.75 0 0 0 915.91 121.56A66.75 66.75 0 0 0 864.94 70.59ZM849.69 57.36A78.45 78.45 0 0 1 772.26 134.79A78.45 78.45 0 0 1 849.69 57.36ZM836.46 70.59A66.75 66.75 0 0 1 785.49 121.56A66.75 66.75 0 0 1 836.46 70.59ZM851.71 216.26A78.45 78.45 0 0 0 929.14 293.69A78.45 78.45 0 0 0 851.71 216.26ZM864.94 229.49A66.75 66.75 0 0 0 915.91 280.46A66.75 66.75 0 0 0 864.94 229.49ZM849.69 216.26A78.45 78.45 0 0 1 772.26 293.69A78.45 78.45 0 0 1 849.69 216.26ZM836.46 229.49A66.75 66.75 0 0 1 785.49 280.46A66.75 66.75 0 0 1 836.46 229.49ZM851.71 375.16A78.45 78.45 0 0 0 929.14 452.59A78.45 78.45 0 0 0 851.71 375.16ZM864.94 388.39A66.75 66.75 0 0 0 915.91 439.36A66.75 66.75 0 0 0 864.94 388.39ZM849.69 375.16A78.45 78.45 0 0 1 772.26 452.59A78.45 78.45 0 0 1 849.69 375.16ZM836.46 388.39A66.75 66.75 0 0 1 785.49 439.36A66.75 66.75 0 0 1 836.46 388.39ZM931.16 -22.09A78.45 78.45 0 0 0 1008.59 55.34A78.45 78.45 0 0 0 931.16 -22.09ZM944.39 -8.86A66.75 66.75 0 0 0 995.36 42.11A66.75 66.75 0 0 0 944.39 -8.86ZM929.14 -22.09A78.45 78.45 0 0 1 851.71 55.34A78.45 78.45 0 0 1 929.14 -22.09ZM915.91 -8.86A66.75 66.75 0 0 1 864.94 42.11A66.75 66.75 0 0 1 915.91 -8.86ZM931.16 136.81A78.45 78.45 0 0 0 1008.59 214.24A78.45 78.45 0 0 0 931.16 136.81ZM944.39 150.04A66.75 66.75 0 0 0 995.36 201.01A66.75 66.75 0 0 0 944.39 150.04ZM929.14 136.81A78.45 78.45 0 0 1 851.71 214.24A78.45 78.45 0 0 1 929.14 136.81ZM915.91 150.04A66.75 66.75 0 0 1 864.94 201.01A66.75 66.75 0 0 1 915.91 150.04ZM931.16 295.71A78.45 78.45 0 0 0 1008.59 373.14A78.45 78.45 0 0 0 931.16 295.71ZM944.39 308.94A66.75 66.75 0 0 0 995.36 359.91A66.75 66.75 0 0 0 944.39 308.94ZM929.14 295.71A78.45 78.45 0 0 1 851.71 373.14A78.45 78.45 0 0 1 929.14 295.71ZM915.91 308.94A66.75 66.75 0 0 1 864.94 359.91A66.75 66.75 0 0 1 915.91 308.94ZM1010.61 57.36A78.45 78.45 0 0 0 1088.04 134.79A78.45 78.45 0 0 0 1010.61 57.36ZM1023.84 70.59A66.75 66.75 0 0 0 1074.81 121.56A66.75 66.75 0 0 0 1023.84 70.59ZM1008.59 57.36A78.45 78.45 0 0 1 931.16 134.79A78.45 78.45 0 0 1 1008.59 57.36ZM995.36 70.59A66.75 66.75 0 0 1 944.39 121.56A66.75 66.75 0 0 1 995.36 70.59ZM1010.61 216.26A78.45 78.45 0 0 0 1088.04 293.69A78.45 78.45 0 0 0 1010.61 216.26ZM1023.84 229.49A66.75 66.75 0 0 0 1074.81 280.46A66.75 66.75 0 0 0 1023.84 229.49ZM1008.59 216.26A78.45 78.45 0 0 1 931.16 293.69A78.45 78.45 0 0 1 1008.59 216.26ZM995.36 229.49A66.75 66.75 0 0 1 944.39 280.46A66.75 66.75 0 0 1 995.36 229.49ZM1010.61 375.16A78.45 78.45 0 0 0 1088.04 452.59A78.45 78.45 0 0 0 1010.61 375.16ZM1023.84 388.39A66.75 66.75 0 0 0 1074.81 439.36A66.75 66.75 0 0 0 1023.84 388.39ZM1008.59 375.16A78.45 78.45 0 0 1 931.16 452.59A78.45 78.45 0 0 1 1008.59 375.16ZM995.36 388.39A66.75 66.75 0 0 1 944.39 439.36A66.75 66.75 0 0 1 995.36 388.39ZM1090.06 -22.09A78.45 78.45 0 0 0 1167.49 55.34A78.45 78.45 0 0 0 1090.06 -22.09ZM1103.29 -8.86A66.75 66.75 0 0 0 1154.26 42.11A66.75 66.75 0 0 0 1103.29 -8.86ZM1088.04 -22.09A78.45 78.45 0 0 1 1010.61 55.34A78.45 78.45 0 0 1 1088.04 -22.09ZM1074.81 -8.86A66.75 66.75 0 0 1 1023.84 42.11A66.75 66.75 0 0 1 1074.81 -8.86ZM1090.06 136.81A78.45 78.45 0 0 0 1167.49 214.24A78.45 78.45 0 0 0 1090.06 136.81ZM1103.29 150.04A66.75 66.75 0 0 0 1154.26 201.01A66.75 66.75 0 0 0 1103.29 150.04ZM1088.04 136.81A78.45 78.45 0 0 1 1010.61 214.24A78.45 78.45 0 0 1 1088.04 136.81ZM1074.81 150.04A66.75 66.75 0 0 1 1023.84 201.01A66.75 66.75 0 0 1 1074.81 150.04ZM1090.06 295.71A78.45 78.45 0 0 0 1167.49 373.14A78.45 78.45 0 0 0 1090.06 295.71ZM1103.29 308.94A66.75 66.75 0 0 0 1154.26 359.91A66.75 66.75 0 0 0 1103.29 308.94ZM1088.04 295.71A78.45 78.45 0 0 1 1010.61 373.14A78.45 78.45 0 0 1 1088.04 295.71ZM1074.81 308.94A66.75 66.75 0 0 1 1023.84 359.91A66.75 66.75 0 0 1 1074.81 308.94ZM1167.49 57.36A78.45 78.45 0 0 1 1090.06 134.79A78.45 78.45 0 0 1 1167.49 57.36ZM1154.26 70.59A66.75 66.75 0 0 1 1103.29 121.56A66.75 66.75 0 0 1 1154.26 70.59ZM1167.49 216.26A78.45 78.45 0 0 1 1090.06 293.69A78.45 78.45 0 0 1 1167.49 216.26ZM1154.26 229.49A66.75 66.75 0 0 1 1103.29 280.46A66.75 66.75 0 0 1 1154.26 229.49ZM1167.49 375.16A78.45 78.45 0 0 1 1090.06 452.59A78.45 78.45 0 0 1 1167.49 375.16ZM1154.26 388.39A66.75 66.75 0 0 1 1103.29 439.36A66.75 66.75 0 0 1 1154.26 388.39Z"/></g>
  </svg>
  <div class="a" style="left:786.5px;top:494px;width:1.8px;height:85.5px;background:#1A82AE"></div>
  <svg class="ttl" width="1144.5" height="644" style="left:0;top:0"><g fill="#111" fill-rule="evenodd"><path d="M63.5 481.5h16.4v4.1h-16.4z"/><path d="M69.3 481.5h4.8v37.4h-4.8z"/><path d="M87.6 481.5h4.8v37.4h-4.8z"/><path d="M87.6 481.5h13v4.1h-13z"/><path d="M87.6 496.84h12.22v4.1h-12.22z"/><path d="M87.6 514.8h13v4.1h-13z"/><path d="M106.3 481.5L111.7 481.5L125.4 518.9L120 518.9Z"/><path d="M125.1 481.5L119.7 481.5L106 518.9L111.4 518.9Z"/><path d="M131 481.5h16.4v4.1h-16.4z"/><path d="M136.8 481.5h4.8v37.4h-4.8z"/><path d="M168 481.5h4.8v37.4h-4.8z"/><path d="M170.4 481.5H175.03A11.47 15.71 0 0 1 186.5 497.21V503.19A11.47 15.71 0 0 1 175.03 518.9H170.4ZM172.8 485.6H175.03A6.67 11.61 0 0 1 181.7 497.21V503.19A6.67 11.61 0 0 1 175.03 514.8H172.8Z"/><path d="M196 481.5h5v37.4h-5z"/><path d="M210.7 481.5h4.8v37.4h-4.8z"/><path d="M213.1 481.5H218.3A8.4 9.35 0 0 1 226.7 490.85V492.35A8.4 9.35 0 0 1 218.3 501.7H213.1ZM215.5 485.6H218.3A3.6 5.25 0 0 1 221.9 490.85V492.35A3.6 5.25 0 0 1 218.3 497.6H215.5Z"/><path d="M217.08 499.2L222.28 499.2L227.5 518.9L221.9 518.9Z"/><path d="M236.8 481.5h4.8v37.4h-4.8z"/><path d="M236.8 481.5h13v4.1h-13z"/><path d="M236.8 496.84h12.22v4.1h-12.22z"/><path d="M236.8 514.8h13v4.1h-13z"/><path d="M259.6 490.98A7.9 9.48 0 0 1 275.4 490.98V509.42A7.9 9.48 0 0 1 259.6 509.42ZM264.64 490.98A2.86 5.18 0 0 1 270.36 490.98V509.42A2.86 5.18 0 0 1 264.64 509.42Z"/><path fill="#fff" d="M268.5 488.98h8.5v22.44h-8.5z"/><path d="M279.6 481.5h16.4v4.1h-16.4z"/><path d="M285.4 481.5h4.8v37.4h-4.8z"/><path d="M304 481.5h5v37.4h-5z"/><path d="M319 493.98A10.4 12.48 0 0 1 339.8 493.98V506.42A10.4 12.48 0 0 1 319 506.42ZM324.04 493.98A5.36 8.18 0 0 1 334.76 493.98V506.42A5.36 8.18 0 0 1 324.04 506.42Z"/><path d="M348.4 481.5h4.8v37.4h-4.8z"/><path d="M362.2 481.5h4.8v37.4h-4.8z"/><path d="M348.4 481.5L354 481.5L367 518.9L361.4 518.9Z"/><path d="M388 518.9L393.6 518.9L399.95 481.5L395.15 481.5Z"/><path d="M408.3 518.9L402.7 518.9L396.35 481.5L401.15 481.5Z"/><path d="M392.06 508.43h12.18v3.2h-12.18z"/><path d="M416.4 481.5h4.8v37.4h-4.8z"/><path d="M430.2 481.5h4.8v37.4h-4.8z"/><path d="M416.4 481.5L422 481.5L435 518.9L429.4 518.9Z"/><path d="M445.2 481.5h4.8v37.4h-4.8z"/><path d="M447.6 481.5H452.23A11.47 15.71 0 0 1 463.7 497.21V503.19A11.47 15.71 0 0 1 452.23 518.9H447.6ZM450 485.6H452.23A6.67 11.61 0 0 1 458.9 497.21V503.19A6.67 11.61 0 0 1 452.23 514.8H450Z"/><path d="M484 481.5h4.8v37.4h-4.8z"/><path d="M486.4 481.5H491.43A9.08 10.47 0 0 1 500.5 491.97V494.22A9.08 10.47 0 0 1 491.43 504.69H486.4ZM488.8 485.6H491.43A4.28 6.37 0 0 1 495.7 491.97V494.22A4.28 6.37 0 0 1 491.43 500.59H488.8Z"/><path d="M508 493.98A10.4 12.48 0 0 1 528.8 493.98V506.42A10.4 12.48 0 0 1 508 506.42ZM513.04 493.98A5.36 8.17 0 0 1 523.76 493.98V506.42A5.36 8.17 0 0 1 513.04 506.42Z"/><path d="M560.3 481.5h5v37.4h-5z"/><path d="M574 481.5h16.4v4.1h-16.4z"/><path d="M579.8 481.5h4.8v37.4h-4.8z"/><path d="M598.2 481.5h5v37.4h-5z"/><path d="M613.3 493.98A10.4 12.48 0 0 1 634.1 493.98V506.42A10.4 12.48 0 0 1 613.3 506.42ZM618.34 493.98A5.36 8.17 0 0 1 629.06 493.98V506.42A5.36 8.17 0 0 1 618.34 506.42Z"/><path d="M642.7 481.5h4.8v37.4h-4.8z"/><path d="M656.5 481.5h4.8v37.4h-4.8z"/><path d="M642.7 481.5L648.3 481.5L661.3 518.9L655.7 518.9Z"/><path d="M684.6 481.5h5v37.4h-5z"/><path d="M700.1 481.5h4.8v37.4h-4.8z"/><path d="M713.9 481.5h4.8v37.4h-4.8z"/><path d="M700.1 481.5L705.7 481.5L718.7 518.9L713.1 518.9Z"/><path d="M739 518.9L744.6 518.9L750.95 481.5L746.15 481.5Z"/><path d="M759.3 518.9L753.7 518.9L747.35 481.5L752.15 481.5Z"/><path d="M743.06 508.43h12.18v3.2h-12.18z"/><path d="M586.9 538.3h16.4v4.1h-16.4z"/><path d="M592.7 538.3h4.8v37.4h-4.8z"/><path d="M610 538.3h4.8v37.4h-4.8z"/><path d="M610 538.3h13v4.1h-13z"/><path d="M610 553.64h12.22v4.1h-12.22z"/><path d="M610 571.6h13v4.1h-13z"/><path d="M630 538.3L635.4 538.3L649.1 575.7L643.7 575.7Z"/><path d="M648.8 538.3L643.4 538.3L629.7 575.7L635.1 575.7Z"/><path d="M654 538.3h16.4v4.1h-16.4z"/><path d="M659.8 538.3h4.8v37.4h-4.8z"/><path d="M690.8 538.3h4.8v37.4h-4.8z"/><path d="M693.2 538.3H697.25A8.05 8.23 0 0 1 705.3 546.53V549.7A8.05 8.23 0 0 1 697.25 557.93H693.2ZM695.6 542.4H697.25A3.25 4.13 0 0 1 700.5 546.53V549.7A3.25 4.13 0 0 1 697.25 553.83H695.6Z"/><path d="M693.2 553.83H698.04A8.86 10.1 0 0 1 706.9 563.93V565.6A8.86 10.1 0 0 1 698.04 575.7H693.2ZM695.6 557.93H698.04A4.06 6 0 0 1 702.1 563.93V565.6A4.06 6 0 0 1 698.04 571.6H695.6Z"/><path d="M714.6 550.78A10.4 12.48 0 0 1 735.4 550.78V563.22A10.4 12.48 0 0 1 714.6 563.22ZM719.64 550.78A5.36 8.17 0 0 1 730.36 550.78V563.22A5.36 8.17 0 0 1 719.64 563.22Z"/><path d="M741 538.3L746.4 538.3L760.1 575.7L754.7 575.7Z"/><path d="M759.8 538.3L754.4 538.3L740.7 575.7L746.1 575.7Z"/></g><path fill="none" stroke="#111" stroke-width="4.8" d="M550.56 487C548.6 483.9 548.08 483.9 544.15 483.9C536.78 483.9 538.7 488.98 538.7 491.97C538.7 498.33 549.6 500.2 549.6 508.43C549.6 516.5 540.22 516.5 537.26 512.9"/></svg>
</div>
<!-- scrollbar -->
<div class="a" style="left:1583px;top:165px;width:16px;height:596px;background:#DCDCDC"></div>
<div class="a" style="left:1583.5px;top:165.8px;width:15.3px;height:14.5px;background:#FFF;border:1px solid #C6C6C6"></div>
<div class="a" style="left:1583.5px;top:181.5px;width:15.3px;height:192.5px;background:#FFF;border:1px solid #C6C6C6"></div>
<div class="a" style="left:1583.5px;top:761.5px;width:15.3px;height:14.5px;background:#FFF;border:1px solid #C6C6C6"></div>
<!-- thumbnails -->
<div class="a" style="left:32.2px;top:179px;width:190.5px;height:111.6px;background:#A8321F"></div>
<div class="a" style="left:37.2px;top:183.75px;width:181.1px;height:102.65px;background:#FFF;overflow:hidden">
 <div class="a th" style="left:0;top:0;width:1144.5px;height:644px;transform:scale(0.15824);transform-origin:0 0">
  <svg width="1144.5" height="428.75" style="left:0;top:0;overflow:hidden">
    <rect width="1144.5" height="428.75" fill="#1A82AE"/>
    <g fill="#FFFFFF"><path fill-rule="evenodd" d="M-22.24 -22.09A78.45 78.45 0 0 0 55.19 55.34A78.45 78.45 0 0 0 -22.24 -22.09ZM-9.01 -8.86A66.75 66.75 0 0 0 41.96 42.11A66.75 66.75 0 0 0 -9.01 -8.86ZM-22.24 136.81A78.45 78.45 0 0 0 55.19 214.24A78.45 78.45 0 0 0 -22.24 136.81ZM-9.01 150.04A66.75 66.75 0 0 0 41.96 201.01A66.75 66.75 0 0 0 -9.01 150.04ZM-22.24 295.71A78.45 78.45 0 0 0 55.19 373.14A78.45 78.45 0 0 0 -22.24 295.71ZM-9.01 308.94A66.75 66.75 0 0 0 41.96 359.91A66.75 66.75 0 0 0 -9.01 308.94ZM57.21 57.36A78.45 78.45 0 0 0 134.64 134.79A78.45 78.45 0 0 0 57.21 57.36ZM70.44 70.59A66.75 66.75 0 0 0 121.41 121.56A66.75 66.75 0 0 0 70.44 70.59ZM55.19 57.36A78.45 78.45 0 0 1 -22.24 134.79A78.45 78.45 0 0 1 55.19 57.36ZM41.96 70.59A66.75 66.75 0 0 1 -9.01 121.56A66.75 66.75 0 0 1 41.96 70.59ZM57.21 216.26A78.45 78.45 0 0 0 134.64 293.69A78.45 78.45 0 0 0 57.21 216.26ZM70.44 229.49A66.75 66.75 0 0 0 121.41 280.46A66.75 66.75 0 0 0 70.44 229.49ZM55.19 216.26A78.45 78.45 0 0 1 -22.24 293.69A78.45 78.45 0 0 1 55.19 216.26ZM41.96 229.49A66.75 66.75 0 0 1 -9.01 280.46A66.75 66.75 0 0 1 41.96 229.49ZM57.21 375.16A78.45 78.45 0 0 0 134.64 452.59A78.45 78.45 0 0 0 57.21 375.16ZM70.44 388.39A66.75 66.75 0 0 0 121.41 439.36A66.75 66.75 0 0 0 70.44 388.39ZM55.19 375.16A78.45 78.45 0 0 1 -22.24 452.59A78.45 78.45 0 0 1 55.19 375.16ZM41.96 388.39A66.75 66.75 0 0 1 -9.01 439.36A66.75 66.75 0 0 1 41.96 388.39ZM136.66 -22.09A78.45 78.45 0 0 0 214.09 55.34A78.45 78.45 0 0 0 136.66 -22.09ZM149.89 -8.86A66.75 66.75 0 0 0 200.86 42.11A66.75 66.75 0 0 0 149.89 -8.86ZM134.64 -22.09A78.45 78.45 0 0 1 57.21 55.34A78.45 78.45 0 0 1 134.64 -22.09ZM121.41 -8.86A66.75 66.75 0 0 1 70.44 42.11A66.75 66.75 0 0 1 121.41 -8.86ZM136.66 136.81A78.45 78.45 0 0 0 214.09 214.24A78.45 78.45 0 0 0 136.66 136.81ZM149.89 150.04A66.75 66.75 0 0 0 200.86 201.01A66.75 66.75 0 0 0 149.89 150.04ZM134.64 136.81A78.45 78.45 0 0 1 57.21 214.24A78.45 78.45 0 0 1 134.64 136.81ZM121.41 150.04A66.75 66.75 0 0 1 70.44 201.01A66.75 66.75 0 0 1 121.41 150.04ZM136.66 295.71A78.45 78.45 0 0 0 214.09 373.14A78.45 78.45 0 0 0 136.66 295.71ZM149.89 308.94A66.75 66.75 0 0 0 200.86 359.91A66.75 66.75 0 0 0 149.89 308.94ZM134.64 295.71A78.45 78.45 0 0 1 57.21 373.14A78.45 78.45 0 0 1 134.64 295.71ZM121.41 308.94A66.75 66.75 0 0 1 70.44 359.91A66.75 66.75 0 0 1 121.41 308.94ZM216.11 57.36A78.45 78.45 0 0 0 293.54 134.79A78.45 78.45 0 0 0 216.11 57.36ZM229.34 70.59A66.75 66.75 0 0 0 280.31 121.56A66.75 66.75 0 0 0 229.34 70.59ZM214.09 57.36A78.45 78.45 0 0 1 136.66 134.79A78.45 78.45 0 0 1 214.09 57.36ZM200.86 70.59A66.75 66.75 0 0 1 149.89 121.56A66.75 66.75 0 0 1 200.86 70.59ZM216.11 216.26A78.45 78.45 0 0 0 293.54 293.69A78.45 78.45 0 0 0 216.11 216.26ZM229.34 229.49A66.75 66.75 0 0 0 280.31 280.46A66.75 66.75 0 0 0 229.34 229.49ZM214.09 216.26A78.45 78.45 0 0 1 136.66 293.69A78.45 78.45 0 0 1 214.09 216.26ZM200.86 229.49A66.75 66.75 0 0 1 149.89 280.46A66.75 66.75 0 0 1 200.86 229.49ZM216.11 375.16A78.45 78.45 0 0 0 293.54 452.59A78.45 78.45 0 0 0 216.11 375.16ZM229.34 388.39A66.75 66.75 0 0 0 280.31 439.36A66.75 66.75 0 0 0 229.34 388.39ZM214.09 375.16A78.45 78.45 0 0 1 136.66 452.59A78.45 78.45 0 0 1 214.09 375.16ZM200.86 388.39A66.75 66.75 0 0 1 149.89 439.36A66.75 66.75 0 0 1 200.86 388.39ZM295.56 -22.09A78.45 78.45 0 0 0 372.99 55.34A78.45 78.45 0 0 0 295.56 -22.09ZM308.79 -8.86A66.75 66.75 0 0 0 359.76 42.11A66.75 66.75 0 0 0 308.79 -8.86ZM293.54 -22.09A78.45 78.45 0 0 1 216.11 55.34A78.45 78.45 0 0 1 293.54 -22.09ZM280.31 -8.86A66.75 66.75 0 0 1 229.34 42.11A66.75 66.75 0 0 1 280.31 -8.86ZM295.56 136.81A78.45 78.45 0 0 0 372.99 214.24A78.45 78.45 0 0 0 295.56 136.81ZM308.79 150.04A66.75 66.75 0 0 0 359.76 201.01A66.75 66.75 0 0 0 308.79 150.04ZM293.54 136.81A78.45 78.45 0 0 1 216.11 214.24A78.45 78.45 0 0 1 293.54 136.81ZM280.31 150.04A66.75 66.75 0 0 1 229.34 201.01A66.75 66.75 0 0 1 280.31 150.04ZM295.56 295.71A78.45 78.45 0 0 0 372.99 373.14A78.45 78.45 0 0 0 295.56 295.71ZM308.79 308.94A66.75 66.75 0 0 0 359.76 359.91A66.75 66.75 0 0 0 308.79 308.94ZM293.54 295.71A78.45 78.45 0 0 1 216.11 373.14A78.45 78.45 0 0 1 293.54 295.71ZM280.31 308.94A66.75 66.75 0 0 1 229.34 359.91A66.75 66.75 0 0 1 280.31 308.94ZM375.01 57.36A78.45 78.45 0 0 0 452.44 134.79A78.45 78.45 0 0 0 375.01 57.36ZM388.24 70.59A66.75 66.75 0 0 0 439.21 121.56A66.75 66.75 0 0 0 388.24 70.59ZM372.99 57.36A78.45 78.45 0 0 1 295.56 134.79A78.45 78.45 0 0 1 372.99 57.36ZM359.76 70.59A66.75 66.75 0 0 1 308.79 121.56A66.75 66.75 0 0 1 359.76 70.59ZM375.01 216.26A78.45 78.45 0 0 0 452.44 293.69A78.45 78.45 0 0 0 375.01 216.26ZM388.24 229.49A66.75 66.75 0 0 0 439.21 280.46A66.75 66.75 0 0 0 388.24 229.49ZM372.99 216.26A78.45 78.45 0 0 1 295.56 293.69A78.45 78.45 0 0 1 372.99 216.26ZM359.76 229.49A66.75 66.75 0 0 1 308.79 280.46A66.75 66.75 0 0 1 359.76 229.49ZM375.01 375.16A78.45 78.45 0 0 0 452.44 452.59A78.45 78.45 0 0 0 375.01 375.16ZM388.24 388.39A66.75 66.75 0 0 0 439.21 439.36A66.75 66.75 0 0 0 388.24 388.39ZM372.99 375.16A78.45 78.45 0 0 1 295.56 452.59A78.45 78.45 0 0 1 372.99 375.16ZM359.76 388.39A66.75 66.75 0 0 1 308.79 439.36A66.75 66.75 0 0 1 359.76 388.39ZM454.46 -22.09A78.45 78.45 0 0 0 531.89 55.34A78.45 78.45 0 0 0 454.46 -22.09ZM467.69 -8.86A66.75 66.75 0 0 0 518.66 42.11A66.75 66.75 0 0 0 467.69 -8.86ZM452.44 -22.09A78.45 78.45 0 0 1 375.01 55.34A78.45 78.45 0 0 1 452.44 -22.09ZM439.21 -8.86A66.75 66.75 0 0 1 388.24 42.11A66.75 66.75 0 0 1 439.21 -8.86ZM454.46 136.81A78.45 78.45 0 0 0 531.89 214.24A78.45 78.45 0 0 0 454.46 136.81ZM467.69 150.04A66.75 66.75 0 0 0 518.66 201.01A66.75 66.75 0 0 0 467.69 150.04ZM452.44 136.81A78.45 78.45 0 0 1 375.01 214.24A78.45 78.45 0 0 1 452.44 136.81ZM439.21 150.04A66.75 66.75 0 0 1 388.24 201.01A66.75 66.75 0 0 1 439.21 150.04ZM454.46 295.71A78.45 78.45 0 0 0 531.89 373.14A78.45 78.45 0 0 0 454.46 295.71ZM467.69 308.94A66.75 66.75 0 0 0 518.66 359.91A66.75 66.75 0 0 0 467.69 308.94ZM452.44 295.71A78.45 78.45 0 0 1 375.01 373.14A78.45 78.45 0 0 1 452.44 295.71ZM439.21 308.94A66.75 66.75 0 0 1 388.24 359.91A66.75 66.75 0 0 1 439.21 308.94ZM533.91 57.36A78.45 78.45 0 0 0 611.34 134.79A78.45 78.45 0 0 0 533.91 57.36ZM547.14 70.59A66.75 66.75 0 0 0 598.11 121.56A66.75 66.75 0 0 0 547.14 70.59ZM531.89 57.36A78.45 78.45 0 0 1 454.46 134.79A78.45 78.45 0 0 1 531.89 57.36ZM518.66 70.59A66.75 66.75 0 0 1 467.69 121.56A66.75 66.75 0 0 1 518.66 70.59ZM533.91 216.26A78.45 78.45 0 0 0 611.34 293.69A78.45 78.45 0 0 0 533.91 216.26ZM547.14 229.49A66.75 66.75 0 0 0 598.11 280.46A66.75 66.75 0 0 0 547.14 229.49ZM531.89 216.26A78.45 78.45 0 0 1 454.46 293.69A78.45 78.45 0 0 1 531.89 216.26ZM518.66 229.49A66.75 66.75 0 0 1 467.69 280.46A66.75 66.75 0 0 1 518.66 229.49ZM533.91 375.16A78.45 78.45 0 0 0 611.34 452.59A78.45 78.45 0 0 0 533.91 375.16ZM547.14 388.39A66.75 66.75 0 0 0 598.11 439.36A66.75 66.75 0 0 0 547.14 388.39ZM531.89 375.16A78.45 78.45 0 0 1 454.46 452.59A78.45 78.45 0 0 1 531.89 375.16ZM518.66 388.39A66.75 66.75 0 0 1 467.69 439.36A66.75 66.75 0 0 1 518.66 388.39ZM613.36 -22.09A78.45 78.45 0 0 0 690.79 55.34A78.45 78.45 0 0 0 613.36 -22.09ZM626.59 -8.86A66.75 66.75 0 0 0 677.56 42.11A66.75 66.75 0 0 0 626.59 -8.86ZM611.34 -22.09A78.45 78.45 0 0 1 533.91 55.34A78.45 78.45 0 0 1 611.34 -22.09ZM598.11 -8.86A66.75 66.75 0 0 1 547.14 42.11A66.75 66.75 0 0 1 598.11 -8.86ZM613.36 136.81A78.45 78.45 0 0 0 690.79 214.24A78.45 78.45 0 0 0 613.36 136.81ZM626.59 150.04A66.75 66.75 0 0 0 677.56 201.01A66.75 66.75 0 0 0 626.59 150.04ZM611.34 136.81A78.45 78.45 0 0 1 533.91 214.24A78.45 78.45 0 0 1 611.34 136.81ZM598.11 150.04A66.75 66.75 0 0 1 547.14 201.01A66.75 66.75 0 0 1 598.11 150.04ZM613.36 295.71A78.45 78.45 0 0 0 690.79 373.14A78.45 78.45 0 0 0 613.36 295.71ZM626.59 308.94A66.75 66.75 0 0 0 677.56 359.91A66.75 66.75 0 0 0 626.59 308.94ZM611.34 295.71A78.45 78.45 0 0 1 533.91 373.14A78.45 78.45 0 0 1 611.34 295.71ZM598.11 308.94A66.75 66.75 0 0 1 547.14 359.91A66.75 66.75 0 0 1 598.11 308.94ZM692.81 57.36A78.45 78.45 0 0 0 770.24 134.79A78.45 78.45 0 0 0 692.81 57.36ZM706.04 70.59A66.75 66.75 0 0 0 757.01 121.56A66.75 66.75 0 0 0 706.04 70.59ZM690.79 57.36A78.45 78.45 0 0 1 613.36 134.79A78.45 78.45 0 0 1 690.79 57.36ZM677.56 70.59A66.75 66.75 0 0 1 626.59 121.56A66.75 66.75 0 0 1 677.56 70.59ZM692.81 216.26A78.45 78.45 0 0 0 770.24 293.69A78.45 78.45 0 0 0 692.81 216.26ZM706.04 229.49A66.75 66.75 0 0 0 757.01 280.46A66.75 66.75 0 0 0 706.04 229.49ZM690.79 216.26A78.45 78.45 0 0 1 613.36 293.69A78.45 78.45 0 0 1 690.79 216.26ZM677.56 229.49A66.75 66.75 0 0 1 626.59 280.46A66.75 66.75 0 0 1 677.56 229.49ZM692.81 375.16A78.45 78.45 0 0 0 770.24 452.59A78.45 78.45 0 0 0 692.81 375.16ZM706.04 388.39A66.75 66.75 0 0 0 757.01 439.36A66.75 66.75 0 0 0 706.04 388.39ZM690.79 375.16A78.45 78.45 0 0 1 613.36 452.59A78.45 78.45 0 0 1 690.79 375.16ZM677.56 388.39A66.75 66.75 0 0 1 626.59 439.36A66.75 66.75 0 0 1 677.56 388.39ZM772.26 -22.09A78.45 78.45 0 0 0 849.69 55.34A78.45 78.45 0 0 0 772.26 -22.09ZM785.49 -8.86A66.75 66.75 0 0 0 836.46 42.11A66.75 66.75 0 0 0 785.49 -8.86ZM770.24 -22.09A78.45 78.45 0 0 1 692.81 55.34A78.45 78.45 0 0 1 770.24 -22.09ZM757.01 -8.86A66.75 66.75 0 0 1 706.04 42.11A66.75 66.75 0 0 1 757.01 -8.86ZM772.26 136.81A78.45 78.45 0 0 0 849.69 214.24A78.45 78.45 0 0 0 772.26 136.81ZM785.49 150.04A66.75 66.75 0 0 0 836.46 201.01A66.75 66.75 0 0 0 785.49 150.04ZM770.24 136.81A78.45 78.45 0 0 1 692.81 214.24A78.45 78.45 0 0 1 770.24 136.81ZM757.01 150.04A66.75 66.75 0 0 1 706.04 201.01A66.75 66.75 0 0 1 757.01 150.04ZM772.26 295.71A78.45 78.45 0 0 0 849.69 373.14A78.45 78.45 0 0 0 772.26 295.71ZM785.49 308.94A66.75 66.75 0 0 0 836.46 359.91A66.75 66.75 0 0 0 785.49 308.94ZM770.24 295.71A78.45 78.45 0 0 1 692.81 373.14A78.45 78.45 0 0 1 770.24 295.71ZM757.01 308.94A66.75 66.75 0 0 1 706.04 359.91A66.75 66.75 0 0 1 757.01 308.94ZM851.71 57.36A78.45 78.45 0 0 0 929.14 134.79A78.45 78.45 0 0 0 851.71 57.36ZM864.94 70.59A66.75 66.75 0 0 0 915.91 121.56A66.75 66.75 0 0 0 864.94 70.59ZM849.69 57.36A78.45 78.45 0 0 1 772.26 134.79A78.45 78.45 0 0 1 849.69 57.36ZM836.46 70.59A66.75 66.75 0 0 1 785.49 121.56A66.75 66.75 0 0 1 836.46 70.59ZM851.71 216.26A78.45 78.45 0 0 0 929.14 293.69A78.45 78.45 0 0 0 851.71 216.26ZM864.94 229.49A66.75 66.75 0 0 0 915.91 280.46A66.75 66.75 0 0 0 864.94 229.49ZM849.69 216.26A78.45 78.45 0 0 1 772.26 293.69A78.45 78.45 0 0 1 849.69 216.26ZM836.46 229.49A66.75 66.75 0 0 1 785.49 280.46A66.75 66.75 0 0 1 836.46 229.49ZM851.71 375.16A78.45 78.45 0 0 0 929.14 452.59A78.45 78.45 0 0 0 851.71 375.16ZM864.94 388.39A66.75 66.75 0 0 0 915.91 439.36A66.75 66.75 0 0 0 864.94 388.39ZM849.69 375.16A78.45 78.45 0 0 1 772.26 452.59A78.45 78.45 0 0 1 849.69 375.16ZM836.46 388.39A66.75 66.75 0 0 1 785.49 439.36A66.75 66.75 0 0 1 836.46 388.39ZM931.16 -22.09A78.45 78.45 0 0 0 1008.59 55.34A78.45 78.45 0 0 0 931.16 -22.09ZM944.39 -8.86A66.75 66.75 0 0 0 995.36 42.11A66.75 66.75 0 0 0 944.39 -8.86ZM929.14 -22.09A78.45 78.45 0 0 1 851.71 55.34A78.45 78.45 0 0 1 929.14 -22.09ZM915.91 -8.86A66.75 66.75 0 0 1 864.94 42.11A66.75 66.75 0 0 1 915.91 -8.86ZM931.16 136.81A78.45 78.45 0 0 0 1008.59 214.24A78.45 78.45 0 0 0 931.16 136.81ZM944.39 150.04A66.75 66.75 0 0 0 995.36 201.01A66.75 66.75 0 0 0 944.39 150.04ZM929.14 136.81A78.45 78.45 0 0 1 851.71 214.24A78.45 78.45 0 0 1 929.14 136.81ZM915.91 150.04A66.75 66.75 0 0 1 864.94 201.01A66.75 66.75 0 0 1 915.91 150.04ZM931.16 295.71A78.45 78.45 0 0 0 1008.59 373.14A78.45 78.45 0 0 0 931.16 295.71ZM944.39 308.94A66.75 66.75 0 0 0 995.36 359.91A66.75 66.75 0 0 0 944.39 308.94ZM929.14 295.71A78.45 78.45 0 0 1 851.71 373.14A78.45 78.45 0 0 1 929.14 295.71ZM915.91 308.94A66.75 66.75 0 0 1 864.94 359.91A66.75 66.75 0 0 1 915.91 308.94ZM1010.61 57.36A78.45 78.45 0 0 0 1088.04 134.79A78.45 78.45 0 0 0 1010.61 57.36ZM1023.84 70.59A66.75 66.75 0 0 0 1074.81 121.56A66.75 66.75 0 0 0 1023.84 70.59ZM1008.59 57.36A78.45 78.45 0 0 1 931.16 134.79A78.45 78.45 0 0 1 1008.59 57.36ZM995.36 70.59A66.75 66.75 0 0 1 944.39 121.56A66.75 66.75 0 0 1 995.36 70.59ZM1010.61 216.26A78.45 78.45 0 0 0 1088.04 293.69A78.45 78.45 0 0 0 1010.61 216.26ZM1023.84 229.49A66.75 66.75 0 0 0 1074.81 280.46A66.75 66.75 0 0 0 1023.84 229.49ZM1008.59 216.26A78.45 78.45 0 0 1 931.16 293.69A78.45 78.45 0 0 1 1008.59 216.26ZM995.36 229.49A66.75 66.75 0 0 1 944.39 280.46A66.75 66.75 0 0 1 995.36 229.49ZM1010.61 375.16A78.45 78.45 0 0 0 1088.04 452.59A78.45 78.45 0 0 0 1010.61 375.16ZM1023.84 388.39A66.75 66.75 0 0 0 1074.81 439.36A66.75 66.75 0 0 0 1023.84 388.39ZM1008.59 375.16A78.45 78.45 0 0 1 931.16 452.59A78.45 78.45 0 0 1 1008.59 375.16ZM995.36 388.39A66.75 66.75 0 0 1 944.39 439.36A66.75 66.75 0 0 1 995.36 388.39ZM1090.06 -22.09A78.45 78.45 0 0 0 1167.49 55.34A78.45 78.45 0 0 0 1090.06 -22.09ZM1103.29 -8.86A66.75 66.75 0 0 0 1154.26 42.11A66.75 66.75 0 0 0 1103.29 -8.86ZM1088.04 -22.09A78.45 78.45 0 0 1 1010.61 55.34A78.45 78.45 0 0 1 1088.04 -22.09ZM1074.81 -8.86A66.75 66.75 0 0 1 1023.84 42.11A66.75 66.75 0 0 1 1074.81 -8.86ZM1090.06 136.81A78.45 78.45 0 0 0 1167.49 214.24A78.45 78.45 0 0 0 1090.06 136.81ZM1103.29 150.04A66.75 66.75 0 0 0 1154.26 201.01A66.75 66.75 0 0 0 1103.29 150.04ZM1088.04 136.81A78.45 78.45 0 0 1 1010.61 214.24A78.45 78.45 0 0 1 1088.04 136.81ZM1074.81 150.04A66.75 66.75 0 0 1 1023.84 201.01A66.75 66.75 0 0 1 1074.81 150.04ZM1090.06 295.71A78.45 78.45 0 0 0 1167.49 373.14A78.45 78.45 0 0 0 1090.06 295.71ZM1103.29 308.94A66.75 66.75 0 0 0 1154.26 359.91A66.75 66.75 0 0 0 1103.29 308.94ZM1088.04 295.71A78.45 78.45 0 0 1 1010.61 373.14A78.45 78.45 0 0 1 1088.04 295.71ZM1074.81 308.94A66.75 66.75 0 0 1 1023.84 359.91A66.75 66.75 0 0 1 1074.81 308.94ZM1167.49 57.36A78.45 78.45 0 0 1 1090.06 134.79A78.45 78.45 0 0 1 1167.49 57.36ZM1154.26 70.59A66.75 66.75 0 0 1 1103.29 121.56A66.75 66.75 0 0 1 1154.26 70.59ZM1167.49 216.26A78.45 78.45 0 0 1 1090.06 293.69A78.45 78.45 0 0 1 1167.49 216.26ZM1154.26 229.49A66.75 66.75 0 0 1 1103.29 280.46A66.75 66.75 0 0 1 1154.26 229.49ZM1167.49 375.16A78.45 78.45 0 0 1 1090.06 452.59A78.45 78.45 0 0 1 1167.49 375.16ZM1154.26 388.39A66.75 66.75 0 0 1 1103.29 439.36A66.75 66.75 0 0 1 1154.26 388.39Z"/></g>
  </svg>
  <div class="a" style="left:787px;top:494px;width:6px;height:85.5px;background:#1A82AE;opacity:.6"></div>
  <svg class="ttl" width="1144.5" height="644" style="left:0;top:0"><g fill="#111" fill-rule="evenodd"><path d="M63.5 481.5h16.4v4.1h-16.4z"/><path d="M69.3 481.5h4.8v37.4h-4.8z"/><path d="M87.6 481.5h4.8v37.4h-4.8z"/><path d="M87.6 481.5h13v4.1h-13z"/><path d="M87.6 496.84h12.22v4.1h-12.22z"/><path d="M87.6 514.8h13v4.1h-13z"/><path d="M106.3 481.5L111.7 481.5L125.4 518.9L120 518.9Z"/><path d="M125.1 481.5L119.7 481.5L106 518.9L111.4 518.9Z"/><path d="M131 481.5h16.4v4.1h-16.4z"/><path d="M136.8 481.5h4.8v37.4h-4.8z"/><path d="M168 481.5h4.8v37.4h-4.8z"/><path d="M170.4 481.5H175.03A11.47 15.71 0 0 1 186.5 497.21V503.19A11.47 15.71 0 0 1 175.03 518.9H170.4ZM172.8 485.6H175.03A6.67 11.61 0 0 1 181.7 497.21V503.19A6.67 11.61 0 0 1 175.03 514.8H172.8Z"/><path d="M196 481.5h5v37.4h-5z"/><path d="M210.7 481.5h4.8v37.4h-4.8z"/><path d="M213.1 481.5H218.3A8.4 9.35 0 0 1 226.7 490.85V492.35A8.4 9.35 0 0 1 218.3 501.7H213.1ZM215.5 485.6H218.3A3.6 5.25 0 0 1 221.9 490.85V492.35A3.6 5.25 0 0 1 218.3 497.6H215.5Z"/><path d="M217.08 499.2L222.28 499.2L227.5 518.9L221.9 518.9Z"/><path d="M236.8 481.5h4.8v37.4h-4.8z"/><path d="M236.8 481.5h13v4.1h-13z"/><path d="M236.8 496.84h12.22v4.1h-12.22z"/><path d="M236.8 514.8h13v4.1h-13z"/><path d="M259.6 490.98A7.9 9.48 0 0 1 275.4 490.98V509.42A7.9 9.48 0 0 1 259.6 509.42ZM264.64 490.98A2.86 5.18 0 0 1 270.36 490.98V509.42A2.86 5.18 0 0 1 264.64 509.42Z"/><path fill="#fff" d="M268.5 488.98h8.5v22.44h-8.5z"/><path d="M279.6 481.5h16.4v4.1h-16.4z"/><path d="M285.4 481.5h4.8v37.4h-4.8z"/><path d="M304 481.5h5v37.4h-5z"/><path d="M319 493.98A10.4 12.48 0 0 1 339.8 493.98V506.42A10.4 12.48 0 0 1 319 506.42ZM324.04 493.98A5.36 8.18 0 0 1 334.76 493.98V506.42A5.36 8.18 0 0 1 324.04 506.42Z"/><path d="M348.4 481.5h4.8v37.4h-4.8z"/><path d="M362.2 481.5h4.8v37.4h-4.8z"/><path d="M348.4 481.5L354 481.5L367 518.9L361.4 518.9Z"/><path d="M388 518.9L393.6 518.9L399.95 481.5L395.15 481.5Z"/><path d="M408.3 518.9L402.7 518.9L396.35 481.5L401.15 481.5Z"/><path d="M392.06 508.43h12.18v3.2h-12.18z"/><path d="M416.4 481.5h4.8v37.4h-4.8z"/><path d="M430.2 481.5h4.8v37.4h-4.8z"/><path d="M416.4 481.5L422 481.5L435 518.9L429.4 518.9Z"/><path d="M445.2 481.5h4.8v37.4h-4.8z"/><path d="M447.6 481.5H452.23A11.47 15.71 0 0 1 463.7 497.21V503.19A11.47 15.71 0 0 1 452.23 518.9H447.6ZM450 485.6H452.23A6.67 11.61 0 0 1 458.9 497.21V503.19A6.67 11.61 0 0 1 452.23 514.8H450Z"/><path d="M484 481.5h4.8v37.4h-4.8z"/><path d="M486.4 481.5H491.43A9.08 10.47 0 0 1 500.5 491.97V494.22A9.08 10.47 0 0 1 491.43 504.69H486.4ZM488.8 485.6H491.43A4.28 6.37 0 0 1 495.7 491.97V494.22A4.28 6.37 0 0 1 491.43 500.59H488.8Z"/><path d="M508 493.98A10.4 12.48 0 0 1 528.8 493.98V506.42A10.4 12.48 0 0 1 508 506.42ZM513.04 493.98A5.36 8.17 0 0 1 523.76 493.98V506.42A5.36 8.17 0 0 1 513.04 506.42Z"/><path d="M560.3 481.5h5v37.4h-5z"/><path d="M574 481.5h16.4v4.1h-16.4z"/><path d="M579.8 481.5h4.8v37.4h-4.8z"/><path d="M598.2 481.5h5v37.4h-5z"/><path d="M613.3 493.98A10.4 12.48 0 0 1 634.1 493.98V506.42A10.4 12.48 0 0 1 613.3 506.42ZM618.34 493.98A5.36 8.17 0 0 1 629.06 493.98V506.42A5.36 8.17 0 0 1 618.34 506.42Z"/><path d="M642.7 481.5h4.8v37.4h-4.8z"/><path d="M656.5 481.5h4.8v37.4h-4.8z"/><path d="M642.7 481.5L648.3 481.5L661.3 518.9L655.7 518.9Z"/><path d="M684.6 481.5h5v37.4h-5z"/><path d="M700.1 481.5h4.8v37.4h-4.8z"/><path d="M713.9 481.5h4.8v37.4h-4.8z"/><path d="M700.1 481.5L705.7 481.5L718.7 518.9L713.1 518.9Z"/><path d="M739 518.9L744.6 518.9L750.95 481.5L746.15 481.5Z"/><path d="M759.3 518.9L753.7 518.9L747.35 481.5L752.15 481.5Z"/><path d="M743.06 508.43h12.18v3.2h-12.18z"/><path d="M586.9 538.3h16.4v4.1h-16.4z"/><path d="M592.7 538.3h4.8v37.4h-4.8z"/><path d="M610 538.3h4.8v37.4h-4.8z"/><path d="M610 538.3h13v4.1h-13z"/><path d="M610 553.64h12.22v4.1h-12.22z"/><path d="M610 571.6h13v4.1h-13z"/><path d="M630 538.3L635.4 538.3L649.1 575.7L643.7 575.7Z"/><path d="M648.8 538.3L643.4 538.3L629.7 575.7L635.1 575.7Z"/><path d="M654 538.3h16.4v4.1h-16.4z"/><path d="M659.8 538.3h4.8v37.4h-4.8z"/><path d="M690.8 538.3h4.8v37.4h-4.8z"/><path d="M693.2 538.3H697.25A8.05 8.23 0 0 1 705.3 546.53V549.7A8.05 8.23 0 0 1 697.25 557.93H693.2ZM695.6 542.4H697.25A3.25 4.13 0 0 1 700.5 546.53V549.7A3.25 4.13 0 0 1 697.25 553.83H695.6Z"/><path d="M693.2 553.83H698.04A8.86 10.1 0 0 1 706.9 563.93V565.6A8.86 10.1 0 0 1 698.04 575.7H693.2ZM695.6 557.93H698.04A4.06 6 0 0 1 702.1 563.93V565.6A4.06 6 0 0 1 698.04 571.6H695.6Z"/><path d="M714.6 550.78A10.4 12.48 0 0 1 735.4 550.78V563.22A10.4 12.48 0 0 1 714.6 563.22ZM719.64 550.78A5.36 8.17 0 0 1 730.36 550.78V563.22A5.36 8.17 0 0 1 719.64 563.22Z"/><path d="M741 538.3L746.4 538.3L760.1 575.7L754.7 575.7Z"/><path d="M759.8 538.3L754.4 538.3L740.7 575.7L746.1 575.7Z"/></g><path fill="none" stroke="#111" stroke-width="4.8" d="M550.56 487C548.6 483.9 548.08 483.9 544.15 483.9C536.78 483.9 538.7 488.98 538.7 491.97C538.7 498.33 549.6 500.2 549.6 508.43C549.6 516.5 540.22 516.5 537.26 512.9"/></svg>
 </div>
</div>
<div class="a" style="left:36.5px;top:307.5px;width:182px;height:103.5px;background:#FFF;border:1px solid #C8C8C8"></div>
<div class="a" style="left:36.5px;top:431.5px;width:182px;height:103.5px;background:#FFF;border:1px solid #C8C8C8"></div>
<!-- status bar -->
<div class="a" style="left:0;top:833px;width:1600px;height:1px;background:#CDCDCD"></div>
<div class="a" style="left:0;top:834px;width:1600px;height:2px;background:#E4E4E4"></div>
<div class="a" style="left:0;top:836px;width:1600px;height:22px;background:#F1F1F1"></div>
<div class="a" style="left:0;top:858px;width:1600px;height:1px;background:#222"></div>
<div class="a" style="left:50px;top:858px;width:358px;height:1px;background:#8A8A8A"></div>
<div class="a" style="left:1229.25px;top:836.5px;width:41.5px;height:20.8px;background:#C6C6C6"></div>
<svg width="1600" height="30" viewBox="0 832 1600 30" style="left:0;top:832px">
<g fill="none" stroke="#666" stroke-width="1">
<path d="M83.75 841.5H90.5V852.5H83.75ZM90.5 841.5H97.8V852.5H90.5M90.5 852.5V853.5"/>
</g>
<path d="M92 847.5L94 849.5L97.5 844" fill="none" stroke="#666" stroke-width="1"/>
<path d="M1076.5 845.3L1079.5 842.3L1082.5 845.3Z" fill="#6A6A6A"/>
<path d="M1074.3 847H1084.8M1074.3 849.2H1084.8M1074.3 851.7H1081" stroke="#7A7A7A" stroke-width="1.1"/>
<path d="M1141.5 840.8H1153.2A1.3 1.3 0 0 1 1154.5 842.1V849.2A1.3 1.3 0 0 1 1153.2 850.5H1145.5L1143.5 852.8V850.5H1141.5A1.3 1.3 0 0 1 1140.2 849.2V842.1A1.3 1.3 0 0 1 1141.5 840.8Z" fill="#5A5A5A"/>
<g fill="none" stroke="#666" stroke-width="1">
<rect x="1243" y="841.4" width="13.2" height="11.8"/>
<path d="M1246.5 841.4V853.2M1246.5 849.8H1256.2"/>
<rect x="1248.8" y="843.8" width="4.6" height="2.8"/>
<rect x="1284.5" y="841.3" width="5" height="4.1"/><rect x="1292.3" y="841.3" width="5" height="4.1"/>
<rect x="1284.5" y="848.6" width="5" height="4.1"/><rect x="1292.3" y="848.6" width="5" height="4.1"/>
<path d="M1326.5 841.5H1332.5V852.2H1326.5ZM1333.3 841.5H1339.4V852.2H1333.3ZM1328 844.5H1331M1328 847H1331M1328 849.5H1331M1334.8 844.5H1337.8M1334.8 847H1337.8M1334.8 849.5H1337.8"/>
<path d="M1367.4 841.5H1381.8M1369.3 841.5V848.3H1380V841.5M1374.6 848.3V852.2M1372.2 852.6H1377M1371.8 844.5H1377.5"/>
<path d="M1401.3 846.8H1409.6" stroke-width="1.3"/>
<path d="M1415 847.5H1519" stroke="#A8A8A8"/>
<path d="M1467 844.75V850" stroke="#B0B0B0"/>
<path d="M1524.2 847H1532M1528.1 842.9V851" stroke-width="1.3"/>
<rect x="1582" y="841.8" width="10" height="10"/>
</g>
<rect x="1457.7" y="841.7" width="4.8" height="11.3" fill="#555"/>
<path d="M1584 843.8L1586.3 846.1M1590 843.8L1587.7 846.1M1584 849.8L1586.3 847.5M1590 849.8L1587.7 847.5" stroke="#777" stroke-width="1"/>
</svg>
<!-- scroll arrows -->
<svg width="20" height="660" viewBox="1580 160 20 660" style="left:1580px;top:160px">
<path d="M1591 170.2L1594.3 173.6H1587.7Z" fill="#6A6A6A"/>
<path d="M1587.7 767L1594.3 767L1591 770.4Z" fill="#6A6A6A"/>
<path d="M1588 786.2H1594M1591 782.6L1594 785.8H1588ZM1591 786.2L1594 789.4H1588Z" fill="#6A6A6A" stroke="#6A6A6A" stroke-width="0.6"/>
<path d="M1588 800H1594M1591 806.2L1594 803H1588ZM1591 803L1594 799.8H1588Z" fill="#6A6A6A" stroke="#6A6A6A" stroke-width="0.6"/>
</svg>
<!-- thumbnails 2,3 content -->
<div class="a" style="left:48.5px;top:320.5px;width:1px;height:14px;background:#5FA8CC"></div>
<div class="a" style="left:48.5px;top:444.8px;width:1px;height:14px;background:#5FA8CC"></div>
<div class="t" style="left:721.98px;top:10.90px;font-size:13px;color:#FFFFFF;font-weight:400;transform:scaleX(0.9393);">Presentation1&nbsp;&nbsp;-&nbsp;&nbsp;PowerPoint</div>
<div class="t" style="left:1283.20px;top:10.22px;font-size:12.5px;color:#FFFFFF;font-weight:400;transform:scaleX(0.9628);">Annie Sanjana</div>
<div class="t" style="left:1545.49px;top:46.96px;font-size:12.8px;color:#FFFFFF;font-weight:400;transform:scaleX(0.9083);">Share</div>
<div class="t" style="left:20.49px;top:45.96px;font-size:12.8px;color:#FFFFFF;font-weight:400;transform:scaleX(0.9709);">File</div>
<div class="t" style="left:129.49px;top:45.96px;font-size:12.8px;color:#FFFFFF;font-weight:400;transform:scaleX(0.9690);">Insert</div>
<div class="t" style="left:181.99px;top:45.96px;font-size:12.8px;color:#FFFFFF;font-weight:400;transform:scaleX(0.9857);">Design</div>
<div class="t" style="left:243.24px;top:45.96px;font-size:12.8px;color:#FFFFFF;font-weight:400;transform:scaleX(0.9501);">Transitions</div>
<div class="t" style="left:323.74px;top:45.96px;font-size:12.8px;color:#FFFFFF;font-weight:400;transform:scaleX(1.0033);">Animations</div>
<div class="t" style="left:408.99px;top:45.96px;font-size:12.8px;color:#FFFFFF;font-weight:400;transform:scaleX(0.9608);">Slide Show</div>
<div class="t" style="left:491.99px;top:45.96px;font-size:12.8px;color:#FFFFFF;font-weight:400;transform:scaleX(0.9596);">Review</div>
<div class="t" style="left:553.24px;top:45.96px;font-size:12.8px;color:#FFFFFF;font-weight:400;transform:scaleX(1.0185);">View</div>
<div class="t" style="left:602.74px;top:45.96px;font-size:12.8px;color:#FFFFFF;font-weight:400;transform:scaleX(1.0549);">Help</div>
<div class="t" style="left:683.24px;top:45.96px;font-size:12.8px;color:#FFFFFF;font-weight:400;transform:scaleX(0.9959);">Tell me what you want to do</div>
<div class="t" style="left:72.49px;top:46.16px;font-size:12.8px;color:#C0533A;font-weight:400;transform:scaleX(1.0405);">Home</div>
<div class="t" style="left:15.82px;top:112.04px;font-size:12px;color:#444444;font-weight:400;transform:scaleX(0.9242);">Paste</div>
<div class="t" style="left:74.52px;top:77.14px;font-size:12px;color:#444444;font-weight:400;transform:scaleX(1.0146);">Cut</div>
<div class="t" style="left:74.52px;top:101.04px;font-size:12px;color:#444444;font-weight:400;transform:scaleX(1.0337);">Copy</div>
<div class="t" style="left:75.02px;top:124.84px;font-size:12px;color:#444444;font-weight:400;transform:scaleX(1.0126);">Format Painter</div>
<div class="t" style="left:52.57px;top:149.26px;font-size:10.8px;color:#444444;font-weight:400;transform:scaleX(1.0356);">Clipboard</div>
<div class="t" style="left:188.52px;top:112.04px;font-size:12px;color:#444444;font-weight:400;transform:scaleX(1.0268);">New</div>
<div class="t" style="left:182.02px;top:128.44px;font-size:12px;color:#444444;font-weight:400;transform:scaleX(1.0589);">Slide</div>
<div class="t" style="left:246.02px;top:77.14px;font-size:12px;color:#444444;font-weight:400;transform:scaleX(1.0119);">Layout</div>
<div class="t" style="left:246.02px;top:101.04px;font-size:12px;color:#444444;font-weight:400;transform:scaleX(0.9586);">Reset</div>
<div class="t" style="left:246.02px;top:124.94px;font-size:12px;color:#444444;font-weight:400;transform:scaleX(1.0107);">Section</div>
<div class="t" style="left:225.57px;top:149.26px;font-size:10.8px;color:#444444;font-weight:400;transform:scaleX(0.9810);">Slides</div>
<div class="t" style="left:462.50px;top:85.02px;font-size:12.5px;color:#A8A8A8;font-weight:400;transform:scaleX(0.9708);">50</div>
<div class="t" style="left:432.57px;top:149.26px;font-size:10.8px;color:#444444;font-weight:400;transform:scaleX(0.9655);">Font</div>
<div class="t" style="left:793.52px;top:76.74px;font-size:12px;color:#ADADAD;font-weight:400;transform:scaleX(1.0503);">Text Direction</div>
<div class="t" style="left:793.12px;top:101.14px;font-size:12px;color:#ADADAD;font-weight:400;transform:scaleX(1.0723);">Align Text</div>
<div class="t" style="left:793.12px;top:125.04px;font-size:12px;color:#ADADAD;font-weight:400;transform:scaleX(1.0446);">Convert to SmartArt</div>
<div class="t" style="left:725.57px;top:149.26px;font-size:10.8px;color:#444444;font-weight:400;transform:scaleX(1.0167);">Paragraph</div>
<div class="t" style="left:1078.72px;top:111.44px;font-size:12px;color:#444444;font-weight:400;transform:scaleX(1.0529);">Arrange</div>
<div class="t" style="left:1132.12px;top:112.19px;font-size:12px;color:#ADADAD;font-weight:400;transform:scaleX(1.0447);">Quick</div>
<div class="t" style="left:1127.52px;top:127.94px;font-size:12px;color:#ADADAD;font-weight:400;transform:scaleX(0.9732);">Styles</div>
<div class="t" style="left:1193.02px;top:77.19px;font-size:12px;color:#ADADAD;font-weight:400;transform:scaleX(1.0016);">Shape Fill</div>
<div class="t" style="left:1193.02px;top:101.34px;font-size:12px;color:#ADADAD;font-weight:400;transform:scaleX(1.0249);">Shape Outline</div>
<div class="t" style="left:1193.02px;top:125.44px;font-size:12px;color:#ADADAD;font-weight:400;transform:scaleX(0.9995);">Shape Effects</div>
<div class="t" style="left:1080.57px;top:149.26px;font-size:10.8px;color:#444444;font-weight:400;transform:scaleX(1.0216);">Drawing</div>
<div class="t" style="left:1324.27px;top:77.19px;font-size:12px;color:#444444;font-weight:400;transform:scaleX(1.0028);">Find</div>
<div class="t" style="left:1324.27px;top:101.34px;font-size:12px;color:#444444;font-weight:400;transform:scaleX(1.0041);">Replace</div>
<div class="t" style="left:1324.27px;top:125.44px;font-size:12px;color:#444444;font-weight:400;transform:scaleX(0.9955);">Select</div>
<div class="t" style="left:1327.57px;top:149.26px;font-size:10.8px;color:#444444;font-weight:400;transform:scaleX(0.9954);">Editing</div>
<div class="t" style="left:7.81px;top:843.09px;font-size:11px;color:#444444;font-weight:400;transform:scaleX(1.0106);">Slide 1 of 3</div>
<div class="t" style="left:115.81px;top:843.09px;font-size:11px;color:#444444;font-weight:400;transform:scaleX(0.9612);">English (United States)</div>
<div class="t" style="left:1090.31px;top:842.89px;font-size:11px;color:#444444;font-weight:400;transform:scaleX(0.9958);">Notes</div>
<div class="t" style="left:1157.76px;top:842.89px;font-size:11px;color:#444444;font-weight:400;transform:scaleX(0.9623);">Comments</div>
<div class="t" style="left:1545.76px;top:842.99px;font-size:11px;color:#444444;font-weight:400;transform:scaleX(0.9387);">86%</div>
<div class="t" style="left:12.94px;top:181.55px;font-size:14px;color:#C8553A;font-weight:400;transform:scaleX(0.8491);">1</div>
<div class="t" style="left:12.94px;top:305.75px;font-size:14px;color:#666666;font-weight:400;transform:scaleX(1.1056);">2</div>
<div class="t" style="left:12.94px;top:429.95px;font-size:14px;color:#666666;font-weight:400;transform:scaleX(1.1056);">3</div>
<div class="t" style="left:54.08px;top:323.03px;font-size:8px;color:#333;font-weight:700;transform:scaleX(0.6785);">EXAMPLE</div>
<div class="t" style="left:54.08px;top:447.23px;font-size:8px;color:#333;font-weight:700;transform:scaleX(0.7197);">THANK YOU!</div>
<div class="t" style="left:1170.60px;top:686.84px;font-size:25px;color:#111111;font-weight:400;transform:scaleX(1.0148);">developerpublish.com</div>
</body></html>
